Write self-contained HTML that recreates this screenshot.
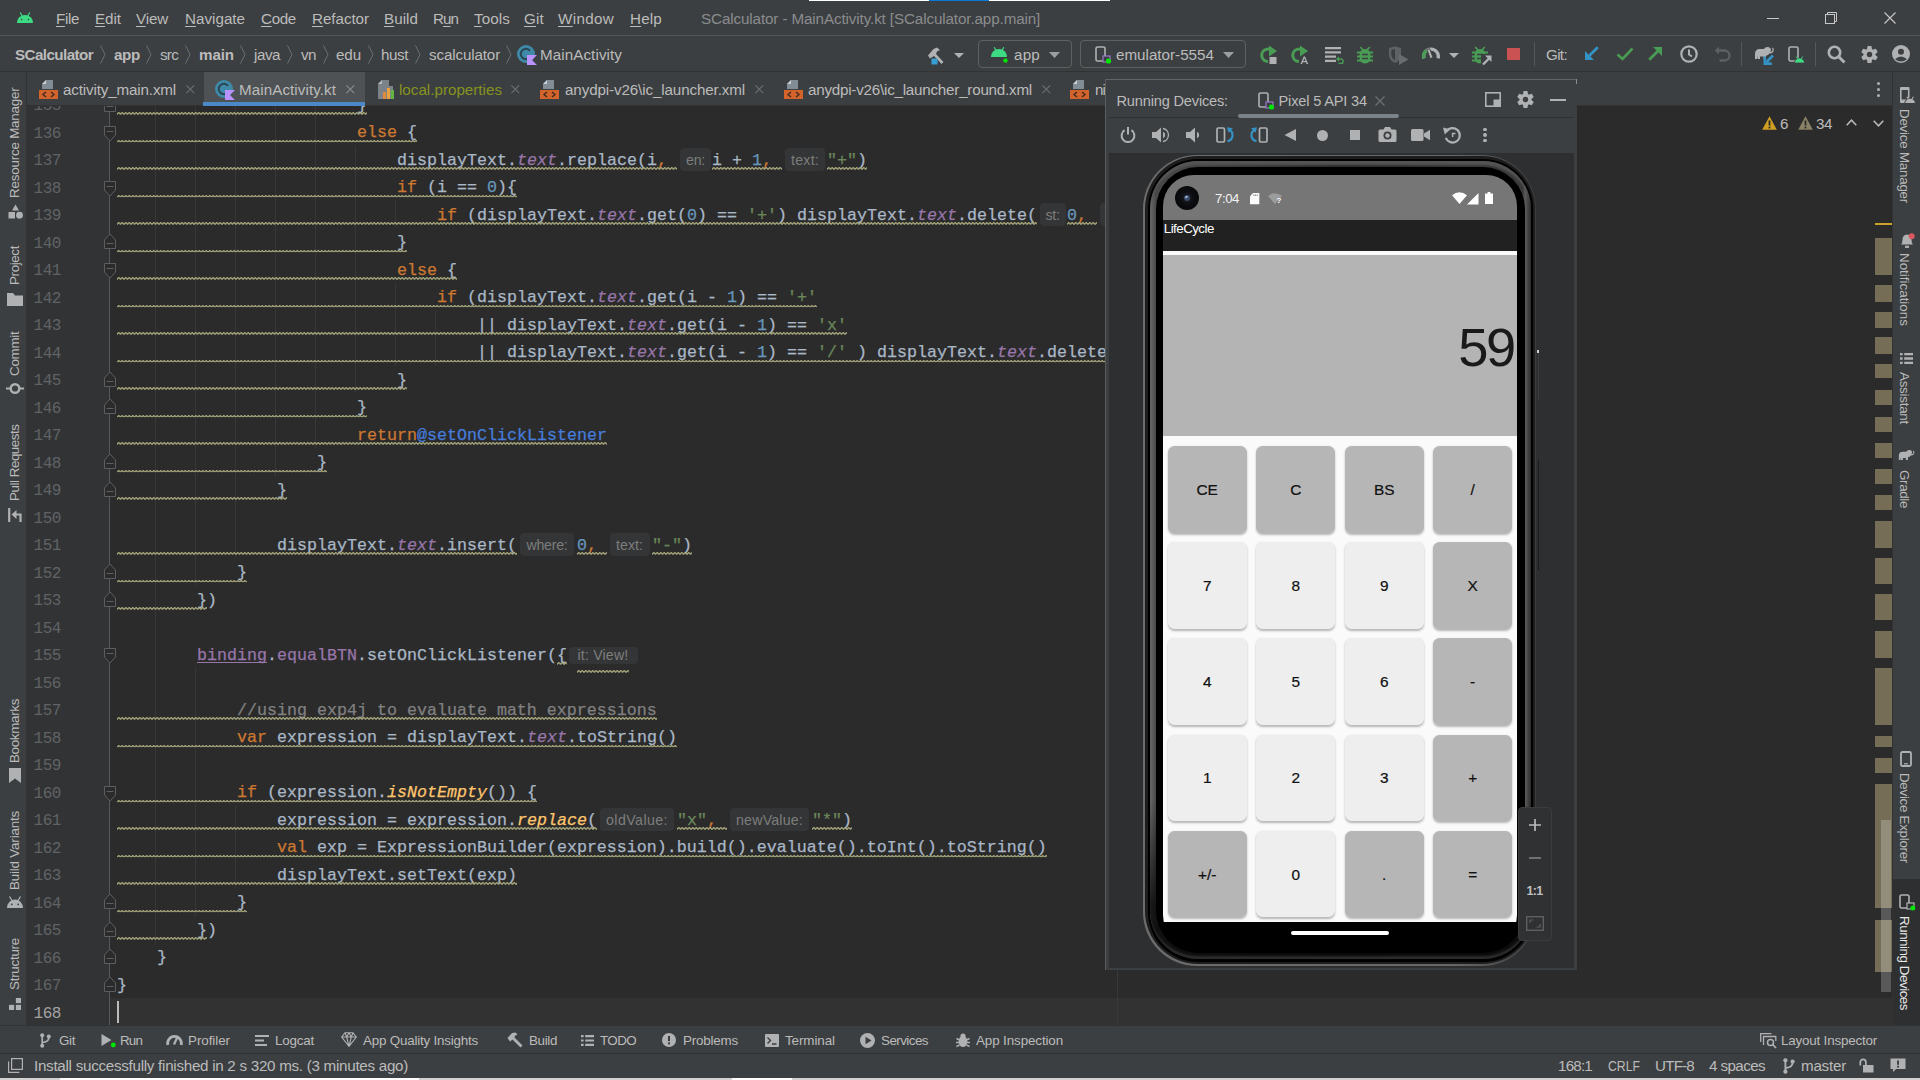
<!DOCTYPE html>
<html><head><meta charset="utf-8"><title>SCalculator</title>
<style>
html,body{margin:0;padding:0;background:#2b2b2b;}
body{width:1920px;height:1080px;position:relative;overflow:hidden;font-family:"Liberation Sans",sans-serif;}
div,span.t,svg{position:absolute;}
span.t{white-space:pre;line-height:1;}
svg{overflow:visible;}
u{text-decoration:underline;text-underline-offset:2px;text-decoration-thickness:1px;}
</style></head>
<body>
<div style="left:0px;top:0px;width:1920px;height:1080px;background:#2b2b2b;"></div>
<div style="left:0px;top:0px;width:1920px;height:36px;background:#3c3f41;"></div>
<div style="left:0px;top:35px;width:1920px;height:1px;background:#555555;"></div>
<div style="left:0px;top:36px;width:1920px;height:36px;background:#3c3f41;"></div>
<div style="left:0px;top:71px;width:1920px;height:1px;background:#323232;"></div>
<div style="left:0px;top:72px;width:1920px;height:33px;background:#3c3f41;"></div>
<div style="left:0px;top:105px;width:1920px;height:1px;background:#323232;"></div>
<div style="left:809px;top:0px;width:120px;height:1px;background:#ffffff;"></div>
<div style="left:929px;top:0px;width:60px;height:1px;background:#0a78d7;"></div>
<div style="left:989px;top:0px;width:121px;height:1px;background:#ffffff;"></div>
<svg style="left:17px;top:12px;" width="16" height="11" viewBox="0 0 16 11"><path d="M0 11 A8 8 0 0 1 16 11 Z" fill="#3ddc84"/><path d="M3.2 0.5 L5.2 4 M12.8 0.5 L10.8 4" stroke="#3ddc84" stroke-width="1.2"/><circle cx="4.6" cy="7.6" r="0.8" fill="#3c3f41"/><circle cx="11.4" cy="7.6" r="0.8" fill="#3c3f41"/></svg>
<span class="t" style="font-size:15.2px;color:#bbbbbb;letter-spacing:-0.37px;left:56px;top:11.13px;"><u>F</u>ile</span>
<span class="t" style="font-size:15.2px;color:#bbbbbb;letter-spacing:-0.05px;left:95px;top:11.13px;"><u>E</u>dit</span>
<span class="t" style="font-size:15.2px;color:#bbbbbb;letter-spacing:-0.16px;left:136px;top:11.13px;"><u>V</u>iew</span>
<span class="t" style="font-size:15.2px;color:#bbbbbb;letter-spacing:0.01px;left:185px;top:11.13px;"><u>N</u>avigate</span>
<span class="t" style="font-size:15.2px;color:#bbbbbb;letter-spacing:-0.33px;left:261px;top:11.13px;"><u>C</u>ode</span>
<span class="t" style="font-size:15.2px;color:#bbbbbb;letter-spacing:-0.05px;left:312px;top:11.13px;"><u>R</u>efactor</span>
<span class="t" style="font-size:15.2px;color:#bbbbbb;letter-spacing:0.04px;left:384px;top:11.13px;"><u>B</u>uild</span>
<span class="t" style="font-size:15.2px;color:#bbbbbb;letter-spacing:-0.96px;left:433px;top:11.13px;">R<u>u</u>n</span>
<span class="t" style="font-size:15.2px;color:#bbbbbb;letter-spacing:0.11px;left:474px;top:11.13px;"><u>T</u>ools</span>
<span class="t" style="font-size:15.2px;color:#bbbbbb;letter-spacing:0.19px;left:524px;top:11.13px;"><u>G</u>it</span>
<span class="t" style="font-size:15.2px;color:#bbbbbb;letter-spacing:0.33px;left:558px;top:11.13px;"><u>W</u>indow</span>
<span class="t" style="font-size:15.2px;color:#bbbbbb;letter-spacing:0.19px;left:630px;top:11.13px;"><u>H</u>elp</span>
<span class="t" style="font-size:15.2px;color:#8a8c8e;letter-spacing:-0.11px;left:701px;top:11.13px;">SCalculator - MainActivity.kt [SCalculator.app.main]</span>
<div style="left:1767px;top:18px;width:12px;height:1px;background:#c8c8c8;"></div>
<svg style="left:1825px;top:12px;" width="12" height="12" viewBox="0 0 12 12"><path d="M2.5 2.5 V0.5 H11.5 V9.5 H9.5" fill="none" stroke="#c8c8c8" stroke-width="1"/><rect x="0.5" y="2.5" width="9" height="9" fill="none" stroke="#c8c8c8" stroke-width="1"/></svg>
<svg style="left:1884px;top:12px;" width="12" height="12" viewBox="0 0 12 12"><path d="M0.5 0.5 L11.5 11.5 M11.5 0.5 L0.5 11.5" stroke="#c8c8c8" stroke-width="1.1"/></svg>
<span class="t" style="font-size:15.2px;color:#bbbbbb;font-weight:bold;letter-spacing:-0.58px;left:15px;top:47.13px;">SCalculator</span>
<span class="t" style="font-size:15.2px;color:#bbbbbb;font-weight:bold;letter-spacing:-0.34px;left:114px;top:47.13px;">app</span>
<span class="t" style="font-size:15.2px;color:#bbbbbb;letter-spacing:-0.75px;left:160px;top:47.13px;">src</span>
<span class="t" style="font-size:15.2px;color:#bbbbbb;font-weight:bold;letter-spacing:-0.11px;left:199px;top:47.13px;">main</span>
<span class="t" style="font-size:15.2px;color:#bbbbbb;letter-spacing:-0.47px;left:254px;top:47.13px;">java</span>
<span class="t" style="font-size:15.2px;color:#bbbbbb;letter-spacing:-0.52px;left:301px;top:47.13px;">vn</span>
<span class="t" style="font-size:15.2px;color:#bbbbbb;letter-spacing:-0.12px;left:336px;top:47.13px;">edu</span>
<span class="t" style="font-size:15.2px;color:#bbbbbb;letter-spacing:-0.43px;left:381px;top:47.13px;">hust</span>
<span class="t" style="font-size:15.2px;color:#bbbbbb;letter-spacing:-0.14px;left:429px;top:47.13px;">scalculator</span>
<svg style="left:100px;top:45px;" width="6" height="19" viewBox="0 0 6 19"><path d="M0.5 0.5 L5 9.5 L0.5 18.5" fill="none" stroke="#6b6d6f" stroke-width="1"/></svg>
<svg style="left:146px;top:45px;" width="6" height="19" viewBox="0 0 6 19"><path d="M0.5 0.5 L5 9.5 L0.5 18.5" fill="none" stroke="#6b6d6f" stroke-width="1"/></svg>
<svg style="left:185px;top:45px;" width="6" height="19" viewBox="0 0 6 19"><path d="M0.5 0.5 L5 9.5 L0.5 18.5" fill="none" stroke="#6b6d6f" stroke-width="1"/></svg>
<svg style="left:240px;top:45px;" width="6" height="19" viewBox="0 0 6 19"><path d="M0.5 0.5 L5 9.5 L0.5 18.5" fill="none" stroke="#6b6d6f" stroke-width="1"/></svg>
<svg style="left:287px;top:45px;" width="6" height="19" viewBox="0 0 6 19"><path d="M0.5 0.5 L5 9.5 L0.5 18.5" fill="none" stroke="#6b6d6f" stroke-width="1"/></svg>
<svg style="left:323px;top:45px;" width="6" height="19" viewBox="0 0 6 19"><path d="M0.5 0.5 L5 9.5 L0.5 18.5" fill="none" stroke="#6b6d6f" stroke-width="1"/></svg>
<svg style="left:368px;top:45px;" width="6" height="19" viewBox="0 0 6 19"><path d="M0.5 0.5 L5 9.5 L0.5 18.5" fill="none" stroke="#6b6d6f" stroke-width="1"/></svg>
<svg style="left:415px;top:45px;" width="6" height="19" viewBox="0 0 6 19"><path d="M0.5 0.5 L5 9.5 L0.5 18.5" fill="none" stroke="#6b6d6f" stroke-width="1"/></svg>
<svg style="left:506px;top:45px;" width="6" height="19" viewBox="0 0 6 19"><path d="M0.5 0.5 L5 9.5 L0.5 18.5" fill="none" stroke="#6b6d6f" stroke-width="1"/></svg>
<svg style="left:517px;top:45px;" width="20" height="20" viewBox="0 0 20 20"><circle cx="9" cy="9" r="9" fill="#3e8aa8"/><path d="M13 5.8 A5.2 5.2 0 1 0 13 12.2" fill="none" stroke="#2b4652" stroke-width="2"/><path d="M10 10 H20 L15 15 L20 20 H10 Z" fill="#b992fb"/></svg>
<span class="t" style="font-size:15.2px;color:#bbbbbb;letter-spacing:0.08px;left:540px;top:47.13px;">MainActivity</span>
<svg style="left:926px;top:46px;" width="20" height="19" viewBox="0 0 20 19"><path d="M2 9.5 L7.5 3 L11 1.5 L14 4 L11 5.5 L10 8 L17.5 16 L15.5 18 L8 10 L5.5 11.5 L4 12.5 Z" fill="#afb1b3"/><rect x="5.5" y="12.5" width="6" height="6" fill="#389fd6"/></svg>
<svg style="left:954px;top:53px;" width="10" height="5" viewBox="0 0 10 5"><path d="M0 0 H10 L5 5 Z" fill="#afb1b3"/></svg>
<div style="left:978px;top:40px;width:94px;height:28px;background:transparent;border:1px solid #5e6060;border-radius:4px;box-sizing:border-box;"></div>
<svg style="left:991px;top:47px;" width="18" height="17" viewBox="0 0 18 17"><path d="M0 10 A8 8 0 0 1 16 10 Z" fill="#3ddc84"/><path d="M3.2 0.3 L5 3.5 M12.8 0.3 L11 3.5" stroke="#3ddc84" stroke-width="1.2"/><circle cx="14.5" cy="13.5" r="2.6" fill="#00e600" stroke="#3c3f41" stroke-width="0.8"/></svg>
<span class="t" style="font-size:15.2px;color:#bbbbbb;letter-spacing:0.22px;left:1014px;top:47.13px;">app</span>
<svg style="left:1049px;top:52px;" width="11" height="6" viewBox="0 0 11 6"><path d="M0 0 H11 L5.5 6 Z" fill="#9b9da0"/></svg>
<div style="left:1080px;top:40px;width:166px;height:28px;background:transparent;border:1px solid #5e6060;border-radius:4px;box-sizing:border-box;"></div>
<svg style="left:1095px;top:46px;" width="17" height="18" viewBox="0 0 17 18"><rect x="1" y="1" width="9" height="14" rx="1.5" fill="none" stroke="#afb1b3" stroke-width="1.6"/><rect x="8" y="10" width="7" height="6" fill="#3c3f41" stroke="#9876c8" stroke-width="1.2"/><circle cx="13.5" cy="15" r="2.6" fill="#00e600"/></svg>
<span class="t" style="font-size:15.2px;color:#bbbbbb;left:1116px;top:47.13px;">emulator-5554</span>
<svg style="left:1223px;top:52px;" width="11" height="6" viewBox="0 0 11 6"><path d="M0 0 H11 L5.5 6 Z" fill="#9b9da0"/></svg>
<svg style="left:1260px;top:46px;" width="18" height="18" viewBox="0 0 18 18"><path d="M13.5 6.5 A6.2 6.2 0 1 0 8 15.5" fill="none" stroke="#499c54" stroke-width="3"/><path d="M9 -0.5 L17 5 L9 10.5 Z" fill="#499c54"/><rect x="9.5" y="11" width="7" height="7" fill="#afb1b3"/></svg>
<svg style="left:1291px;top:46px;" width="18" height="18" viewBox="0 0 18 18"><path d="M13.5 6.5 A6.2 6.2 0 1 0 8 15.5" fill="none" stroke="#499c54" stroke-width="3"/><path d="M9 -0.5 L17 5 L9 10.5 Z" fill="#499c54"/><path d="M9.5 18 L12.7 10.5 H14 L17.2 18 H15.6 L15 16.3 H11.7 L11.1 18 Z M12.2 15 H14.5 L13.35 12.2 Z" fill="#afb1b3" fill-rule="evenodd"/></svg>
<svg style="left:1325px;top:47px;" width="19" height="17" viewBox="0 0 19 17"><path d="M0 1.2 H16 M0 5.4 H16 M0 9.6 H11 M0 13.8 H11" stroke="#afb1b3" stroke-width="2.3"/><path d="M13 12 H16 A2.2 2.2 0 0 1 16 16.4 H13.5" fill="none" stroke="#499c54" stroke-width="1.4"/><path d="M14 9.2 L11 12 L14 14.8 Z" fill="#499c54"/></svg>
<svg style="left:1357px;top:45.5px;" width="16" height="18" viewBox="0 0 16 18"><path d="M3.2 1 L6 4 M12.8 1 L10 4" stroke="#499c54" stroke-width="1.7" fill="none"/><path d="M8 3 Q13.5 3 13.5 10 Q13.5 17.5 8 17.5 Q2.5 17.5 2.5 10 Q2.5 3 8 3 Z" fill="#499c54"/><path d="M0 6.6 H4 M16 6.6 H12 M0 10.6 H4 M16 10.6 H12 M0 14.6 H4 M16 14.6 H12" stroke="#499c54" stroke-width="2"/><path d="M5 8.6 H11 M5 12.6 H11" stroke="#3c3f41" stroke-width="1.5"/></svg>
<svg style="left:1388px;top:46px;" width="21" height="19" viewBox="0 0 21 19"><path d="M1 2 L7 0.5 L13 2 V9 Q13 14 7 17 Q1 14 1 9 Z" fill="#5f6264"/><path d="M7 3 V14.5 Q4 12.5 3.3 9 V4 Z" fill="#3c3f41"/><path d="M11 8 L20.5 13.5 L11 19 Z" fill="#6a6d6f"/></svg>
<svg style="left:1422px;top:46.5px;" width="18" height="13" viewBox="0 0 18 13"><path d="M1.85 11.4 A7.4 7.4 0 1 1 16.15 11.4" fill="none" stroke="#afb1b3" stroke-width="3.2"/><path d="M1.85 11.4 A7.4 7.4 0 0 1 4.76 3.44" fill="none" stroke="#499c54" stroke-width="3.4"/><path d="M4.9 2.6 L7.6 1.6 L11 10.6 L8.2 11.6 Z" fill="#afb1b3" stroke="#3c3f41" stroke-width="0.9"/></svg>
<svg style="left:1449px;top:53px;" width="10" height="5" viewBox="0 0 10 5"><path d="M0 0 H10 L5 5 Z" fill="#afb1b3"/></svg>
<svg style="left:1472px;top:45.5px;" width="16" height="18" viewBox="0 0 16 18"><path d="M3.2 1 L6 4 M12.8 1 L10 4" stroke="#499c54" stroke-width="1.7" fill="none"/><path d="M8 3 Q13.5 3 13.5 10 Q13.5 17.5 8 17.5 Q2.5 17.5 2.5 10 Q2.5 3 8 3 Z" fill="#499c54"/><path d="M0 6.6 H4 M16 6.6 H12 M0 10.6 H4 M16 10.6 H12 M0 14.6 H4 M16 14.6 H12" stroke="#499c54" stroke-width="2"/><path d="M5 8.6 H11 M5 12.6 H11" stroke="#3c3f41" stroke-width="1.5"/></svg>
<svg style="left:1481px;top:54px;" width="11" height="11" viewBox="0 0 11 11"><rect x="0" y="0" width="11" height="11" fill="#3c3f41"/><path d="M2 10.5 L8.5 4" fill="none" stroke="#afb1b3" stroke-width="2.4"/><path d="M4 1.5 H10.5 V8 Z" fill="#afb1b3"/></svg>
<div style="left:1507px;top:47.5px;width:12.5px;height:12.5px;background:#cb5252;"></div>
<div style="left:1534px;top:42px;width:1px;height:24px;background:#555759;"></div>
<span class="t" style="font-size:15.2px;color:#bbbbbb;letter-spacing:-0.66px;left:1546px;top:47.13px;">Git:</span>
<svg style="left:1584px;top:46px;" width="15" height="15" viewBox="0 0 15 15"><path d="M13.8 1.2 L5 10" fill="none" stroke="#3592c4" stroke-width="2.7"/><path d="M1 14 V5 L10 14 Z" fill="#3592c4"/></svg>
<svg style="left:1616px;top:47px;" width="18" height="14" viewBox="0 0 18 14"><path d="M1.5 7.5 L6.5 12 L16.5 1.5" fill="none" stroke="#499c54" stroke-width="2.6"/></svg>
<svg style="left:1648px;top:46px;" width="15" height="15" viewBox="0 0 15 15"><path d="M1.2 13.8 L10 5" fill="none" stroke="#499c54" stroke-width="2.7"/><path d="M14 1 H5 L14 10 Z" fill="#499c54"/></svg>
<svg style="left:1680px;top:45px;" width="18" height="18" viewBox="0 0 18 18"><circle cx="9" cy="9" r="7.7" fill="none" stroke="#afb1b3" stroke-width="2.2"/><path d="M9 4.5 V9.5 L12 11.5" fill="none" stroke="#afb1b3" stroke-width="2"/></svg>
<svg style="left:1714px;top:46px;" width="17" height="16" viewBox="0 0 17 16"><path d="M5 0.5 L0.8 4.5 L5 8.5 Z" fill="#5e6062"/><path d="M3.5 4.5 H10.5 A5 5 0 0 1 10.5 14.5 H5.5" fill="none" stroke="#5e6062" stroke-width="2.3"/></svg>
<div style="left:1741px;top:42px;width:1px;height:24px;background:#555759;"></div>
<svg style="left:1754px;top:46px;" width="20" height="19" viewBox="0 0 20 19"><path d="M1 13 V8 Q1 3 6 3 H10 Q11 0.8 14 1 Q16.5 1.2 17 3.5 Q17.3 5 16 5.8 Q17.5 6 18.3 4.8 Q19 3.5 18 2.6 L18.8 1.6 Q20.3 3 19.6 5.2 Q18.5 7.8 15.5 7.6 Q14 9.5 12 9.8 V13 H9.5 V10.5 H6 V13 H3.5 V10 Q3 11 3 13 Z" fill="#afb1b3"/><path d="M19 9.5 L12.5 16 M10.8 10.5 V17.6 H17.8" fill="none" stroke="#3592c4" stroke-width="2.6"/></svg>
<svg style="left:1788px;top:46px;" width="17" height="18" viewBox="0 0 17 18"><rect x="1" y="1" width="9" height="14" rx="1.5" fill="none" stroke="#afb1b3" stroke-width="1.6"/><path d="M6.5 17 A5 5 0 0 1 16.5 17 Z" fill="#3ddc84" stroke="#3c3f41" stroke-width="0.8"/><path d="M8.3 10.6 L9.6 12.6 M14.7 10.6 L13.4 12.6" stroke="#3ddc84" stroke-width="1"/></svg>
<div style="left:1815px;top:42px;width:1px;height:24px;background:#555759;"></div>
<svg style="left:1827px;top:45px;" width="19" height="19" viewBox="0 0 19 19"><circle cx="7.5" cy="7.5" r="5.7" fill="none" stroke="#afb1b3" stroke-width="2.6"/><path d="M11.8 11.8 L17.5 17.5" stroke="#afb1b3" stroke-width="3"/></svg>
<svg style="left:1861px;top:46px;" width="17" height="17" viewBox="0 0 17 17"><g transform="translate(8.5 8.5)"><path d="M-2.6 -5 L-1.9 -8.4 H1.9 L2.6 -5 Z" transform="rotate(0)" fill="#afb1b3"/><path d="M-2.6 -5 L-1.9 -8.4 H1.9 L2.6 -5 Z" transform="rotate(60)" fill="#afb1b3"/><path d="M-2.6 -5 L-1.9 -8.4 H1.9 L2.6 -5 Z" transform="rotate(120)" fill="#afb1b3"/><path d="M-2.6 -5 L-1.9 -8.4 H1.9 L2.6 -5 Z" transform="rotate(180)" fill="#afb1b3"/><path d="M-2.6 -5 L-1.9 -8.4 H1.9 L2.6 -5 Z" transform="rotate(240)" fill="#afb1b3"/><path d="M-2.6 -5 L-1.9 -8.4 H1.9 L2.6 -5 Z" transform="rotate(300)" fill="#afb1b3"/><circle r="5.9" fill="#afb1b3"/><circle r="2.7" fill="#3c3f41"/></g></svg>
<svg style="left:1892px;top:45px;" width="18" height="18" viewBox="0 0 18 18"><circle cx="9" cy="9" r="9" fill="#afb1b3"/><circle cx="9" cy="6.7" r="3" fill="#3c3f41"/><path d="M3 14.2 Q9 9 15 14.2 Q9 19 3 14.2 Z" fill="#3c3f41"/></svg>
<div style="left:204px;top:72px;width:161px;height:33px;background:#4e5254;"></div>
<div style="left:203px;top:102px;width:162px;height:4px;background:#4a88c7;"></div>
<svg style="left:39px;top:80px;" width="19" height="19" viewBox="0 0 19 19"><path d="M7 0 H14 V9 H3 V4 Z" fill="#9aa7b0" opacity="0.75"/><path d="M3 4 L7 0 V4 Z" fill="#c8d0d6"/><rect x="0" y="10" width="19" height="9" fill="#d1632b"/><path d="M7 12 L4 14.5 L7 17 M12 12 L15 14.5 L12 17" fill="none" stroke="#3a2a22" stroke-width="1.3"/></svg>
<span class="t" style="font-size:15.2px;color:#bbbbbb;letter-spacing:-0.15px;left:63px;top:82.13px;">activity_main.xml</span>
<svg style="left:186.1px;top:85.3px;" width="8.6" height="8.6" viewBox="0 0 8.6 8.6"><path d="M0.4 0.4 L8.2 8.2 M8.2 0.4 L0.4 8.2" stroke="#6c7073" stroke-width="1.1"/></svg>
<svg style="left:215px;top:80px;" width="20" height="20" viewBox="0 0 20 20"><circle cx="9" cy="9" r="9" fill="#3e8aa8"/><path d="M13 5.8 A5.2 5.2 0 1 0 13 12.2" fill="none" stroke="#2b4652" stroke-width="2"/><path d="M10 10 H20 L15 15 L20 20 H10 Z" fill="#b992fb"/></svg>
<span class="t" style="font-size:15.2px;color:#bbbbbb;letter-spacing:0.07px;left:239px;top:82.13px;">MainActivity.kt</span>
<svg style="left:346.1px;top:85.3px;" width="8.6" height="8.6" viewBox="0 0 8.6 8.6"><path d="M0.4 0.4 L8.2 8.2 M8.2 0.4 L0.4 8.2" stroke="#8a8d8f" stroke-width="1.1"/></svg>
<svg style="left:377px;top:80px;" width="18" height="19" viewBox="0 0 18 19"><path d="M5 0 H12 V6 H16 V19 H1 V4 Z" fill="#7c8388"/><path d="M1 4 L5 0 V4 Z" fill="#b6bcc0"/><rect x="6" y="12" width="3" height="7" fill="#e08a3c"/><rect x="10" y="8" width="3" height="11" fill="#e8a33d"/><rect x="14" y="10" width="3" height="9" fill="#62b543"/></svg>
<span class="t" style="font-size:15.2px;color:#86921f;left:399px;top:82.13px;">local.properties</span>
<svg style="left:511.1px;top:85.3px;" width="8.6" height="8.6" viewBox="0 0 8.6 8.6"><path d="M0.4 0.4 L8.2 8.2 M8.2 0.4 L0.4 8.2" stroke="#6c7073" stroke-width="1.1"/></svg>
<svg style="left:540px;top:80px;" width="19" height="19" viewBox="0 0 19 19"><path d="M7 0 H14 V9 H3 V4 Z" fill="#9aa7b0" opacity="0.75"/><path d="M3 4 L7 0 V4 Z" fill="#c8d0d6"/><rect x="0" y="10" width="19" height="9" fill="#d1632b"/><path d="M7 12 L4 14.5 L7 17 M12 12 L15 14.5 L12 17" fill="none" stroke="#3a2a22" stroke-width="1.3"/></svg>
<span class="t" style="font-size:15.2px;color:#bbbbbb;letter-spacing:-0.12px;left:565px;top:82.13px;">anydpi-v26\ic_launcher.xml</span>
<svg style="left:755.1px;top:85.3px;" width="8.6" height="8.6" viewBox="0 0 8.6 8.6"><path d="M0.4 0.4 L8.2 8.2 M8.2 0.4 L0.4 8.2" stroke="#6c7073" stroke-width="1.1"/></svg>
<svg style="left:784px;top:80px;" width="19" height="19" viewBox="0 0 19 19"><path d="M7 0 H14 V9 H3 V4 Z" fill="#9aa7b0" opacity="0.75"/><path d="M3 4 L7 0 V4 Z" fill="#c8d0d6"/><rect x="0" y="10" width="19" height="9" fill="#d1632b"/><path d="M7 12 L4 14.5 L7 17 M12 12 L15 14.5 L12 17" fill="none" stroke="#3a2a22" stroke-width="1.3"/></svg>
<span class="t" style="font-size:15.2px;color:#bbbbbb;letter-spacing:-0.23px;left:808px;top:82.13px;">anydpi-v26\ic_launcher_round.xml</span>
<svg style="left:1042.1px;top:85.3px;" width="8.6" height="8.6" viewBox="0 0 8.6 8.6"><path d="M0.4 0.4 L8.2 8.2 M8.2 0.4 L0.4 8.2" stroke="#6c7073" stroke-width="1.1"/></svg>
<svg style="left:1070px;top:80px;" width="19" height="19" viewBox="0 0 19 19"><path d="M7 0 H14 V9 H3 V4 Z" fill="#9aa7b0" opacity="0.75"/><path d="M3 4 L7 0 V4 Z" fill="#c8d0d6"/><rect x="0" y="10" width="19" height="9" fill="#d1632b"/><path d="M7 12 L4 14.5 L7 17 M12 12 L15 14.5 L12 17" fill="none" stroke="#3a2a22" stroke-width="1.3"/></svg>
<span class="t" style="font-size:15.2px;color:#bbbbbb;letter-spacing:-0.91px;left:1095px;top:82.13px;">ni</span>
<div style="left:1876.5px;top:81.5px;width:3px;height:3px;background:#afb1b3;border-radius:50%;"></div>
<div style="left:1876.5px;top:87.5px;width:3px;height:3px;background:#afb1b3;border-radius:50%;"></div>
<div style="left:1876.5px;top:93.5px;width:3px;height:3px;background:#afb1b3;border-radius:50%;"></div>
<div style="left:0;top:106px;width:1920px;height:919px;overflow:hidden"><div style="left:0;top:-106px;width:1920px;height:1080px">
<div style="left:27px;top:106px;width:83px;height:919px;background:#313335;"></div>
<div style="left:110px;top:106px;width:1782px;height:919px;background:#2b2b2b;"></div>
<div style="left:110px;top:998px;width:1782px;height:27.5px;background:#323232;"></div>
<div style="left:1117px;top:106px;width:1px;height:919px;background:#383838;"></div>
<div style="left:155px;top:90.75px;width:1px;height:852.5px;background:#373737;"></div>
<div style="left:195px;top:90.75px;width:1px;height:495px;background:#373737;"></div>
<div style="left:195px;top:668.25px;width:1px;height:247.5px;background:#373737;"></div>
<div style="left:235px;top:90.75px;width:1px;height:467.5px;background:#373737;"></div>
<div style="left:235px;top:805.75px;width:1px;height:82.5px;background:#373737;"></div>
<div style="left:275px;top:90.75px;width:1px;height:385px;background:#373737;"></div>
<div style="left:315px;top:90.75px;width:1px;height:357.5px;background:#373737;"></div>
<div style="left:355px;top:145.75px;width:1px;height:247.5px;background:#373737;"></div>
<div style="left:395px;top:200.75px;width:1px;height:27.5px;background:#373737;"></div>
<div style="left:395px;top:283.25px;width:1px;height:82.5px;background:#373737;"></div>
<div style="left:435px;top:310.75px;width:1px;height:55px;background:#373737;"></div>
<div style="left:109px;top:106px;width:1px;height:919px;background:#56585a;"></div>
<svg style="left:104px;top:125.5px;" width="12" height="16" viewBox="0 0 12 16"><path d="M0.5 0.5 H11.5 V9 L6 15 L0.5 9 Z" fill="#2b2b2b" stroke="#5c5f61" stroke-width="1"/><path d="M2.5 5.5 H9.5" stroke="#5c5f61" stroke-width="1"/></svg>
<svg style="left:104px;top:180.5px;" width="12" height="16" viewBox="0 0 12 16"><path d="M0.5 0.5 H11.5 V9 L6 15 L0.5 9 Z" fill="#2b2b2b" stroke="#5c5f61" stroke-width="1"/><path d="M2.5 5.5 H9.5" stroke="#5c5f61" stroke-width="1"/></svg>
<svg style="left:104px;top:263px;" width="12" height="16" viewBox="0 0 12 16"><path d="M0.5 0.5 H11.5 V9 L6 15 L0.5 9 Z" fill="#2b2b2b" stroke="#5c5f61" stroke-width="1"/><path d="M2.5 5.5 H9.5" stroke="#5c5f61" stroke-width="1"/></svg>
<svg style="left:104px;top:648px;" width="12" height="16" viewBox="0 0 12 16"><path d="M0.5 0.5 H11.5 V9 L6 15 L0.5 9 Z" fill="#2b2b2b" stroke="#5c5f61" stroke-width="1"/><path d="M2.5 5.5 H9.5" stroke="#5c5f61" stroke-width="1"/></svg>
<svg style="left:104px;top:785.5px;" width="12" height="16" viewBox="0 0 12 16"><path d="M0.5 0.5 H11.5 V9 L6 15 L0.5 9 Z" fill="#2b2b2b" stroke="#5c5f61" stroke-width="1"/><path d="M2.5 5.5 H9.5" stroke="#5c5f61" stroke-width="1"/></svg>
<svg style="left:104px;top:95.5px;" width="12" height="16" viewBox="0 0 12 16"><path d="M0.5 15.5 H11.5 V7 L6 1 L0.5 7 Z" fill="#2b2b2b" stroke="#5c5f61" stroke-width="1"/><path d="M2.5 10.5 H9.5" stroke="#5c5f61" stroke-width="1"/></svg>
<svg style="left:104px;top:233px;" width="12" height="16" viewBox="0 0 12 16"><path d="M0.5 15.5 H11.5 V7 L6 1 L0.5 7 Z" fill="#2b2b2b" stroke="#5c5f61" stroke-width="1"/><path d="M2.5 10.5 H9.5" stroke="#5c5f61" stroke-width="1"/></svg>
<svg style="left:104px;top:370.5px;" width="12" height="16" viewBox="0 0 12 16"><path d="M0.5 15.5 H11.5 V7 L6 1 L0.5 7 Z" fill="#2b2b2b" stroke="#5c5f61" stroke-width="1"/><path d="M2.5 10.5 H9.5" stroke="#5c5f61" stroke-width="1"/></svg>
<svg style="left:104px;top:398px;" width="12" height="16" viewBox="0 0 12 16"><path d="M0.5 15.5 H11.5 V7 L6 1 L0.5 7 Z" fill="#2b2b2b" stroke="#5c5f61" stroke-width="1"/><path d="M2.5 10.5 H9.5" stroke="#5c5f61" stroke-width="1"/></svg>
<svg style="left:104px;top:453px;" width="12" height="16" viewBox="0 0 12 16"><path d="M0.5 15.5 H11.5 V7 L6 1 L0.5 7 Z" fill="#2b2b2b" stroke="#5c5f61" stroke-width="1"/><path d="M2.5 10.5 H9.5" stroke="#5c5f61" stroke-width="1"/></svg>
<svg style="left:104px;top:480.5px;" width="12" height="16" viewBox="0 0 12 16"><path d="M0.5 15.5 H11.5 V7 L6 1 L0.5 7 Z" fill="#2b2b2b" stroke="#5c5f61" stroke-width="1"/><path d="M2.5 10.5 H9.5" stroke="#5c5f61" stroke-width="1"/></svg>
<svg style="left:104px;top:563px;" width="12" height="16" viewBox="0 0 12 16"><path d="M0.5 15.5 H11.5 V7 L6 1 L0.5 7 Z" fill="#2b2b2b" stroke="#5c5f61" stroke-width="1"/><path d="M2.5 10.5 H9.5" stroke="#5c5f61" stroke-width="1"/></svg>
<svg style="left:104px;top:590.5px;" width="12" height="16" viewBox="0 0 12 16"><path d="M0.5 15.5 H11.5 V7 L6 1 L0.5 7 Z" fill="#2b2b2b" stroke="#5c5f61" stroke-width="1"/><path d="M2.5 10.5 H9.5" stroke="#5c5f61" stroke-width="1"/></svg>
<svg style="left:104px;top:893px;" width="12" height="16" viewBox="0 0 12 16"><path d="M0.5 15.5 H11.5 V7 L6 1 L0.5 7 Z" fill="#2b2b2b" stroke="#5c5f61" stroke-width="1"/><path d="M2.5 10.5 H9.5" stroke="#5c5f61" stroke-width="1"/></svg>
<svg style="left:104px;top:920.5px;" width="12" height="16" viewBox="0 0 12 16"><path d="M0.5 15.5 H11.5 V7 L6 1 L0.5 7 Z" fill="#2b2b2b" stroke="#5c5f61" stroke-width="1"/><path d="M2.5 10.5 H9.5" stroke="#5c5f61" stroke-width="1"/></svg>
<svg style="left:104px;top:948px;" width="12" height="16" viewBox="0 0 12 16"><path d="M0.5 15.5 H11.5 V7 L6 1 L0.5 7 Z" fill="#2b2b2b" stroke="#5c5f61" stroke-width="1"/><path d="M2.5 10.5 H9.5" stroke="#5c5f61" stroke-width="1"/></svg>
<svg style="left:104px;top:975.5px;" width="12" height="16" viewBox="0 0 12 16"><path d="M0.5 15.5 H11.5 V7 L6 1 L0.5 7 Z" fill="#2b2b2b" stroke="#5c5f61" stroke-width="1"/><path d="M2.5 10.5 H9.5" stroke="#5c5f61" stroke-width="1"/></svg>
<span class="t" style="font-size:16px;color:#606366;font-family:'Liberation Mono', monospace;left:33.5px;top:98.14px;letter-spacing:-0.45px;">135</span>
<span class="t" style="font-size:16px;color:#606366;font-family:'Liberation Mono', monospace;left:33.5px;top:125.64px;letter-spacing:-0.45px;">136</span>
<span class="t" style="font-size:16px;color:#606366;font-family:'Liberation Mono', monospace;left:33.5px;top:153.14px;letter-spacing:-0.45px;">137</span>
<span class="t" style="font-size:16px;color:#606366;font-family:'Liberation Mono', monospace;left:33.5px;top:180.64px;letter-spacing:-0.45px;">138</span>
<span class="t" style="font-size:16px;color:#606366;font-family:'Liberation Mono', monospace;left:33.5px;top:208.14px;letter-spacing:-0.45px;">139</span>
<span class="t" style="font-size:16px;color:#606366;font-family:'Liberation Mono', monospace;left:33.5px;top:235.64px;letter-spacing:-0.45px;">140</span>
<span class="t" style="font-size:16px;color:#606366;font-family:'Liberation Mono', monospace;left:33.5px;top:263.14px;letter-spacing:-0.45px;">141</span>
<span class="t" style="font-size:16px;color:#606366;font-family:'Liberation Mono', monospace;left:33.5px;top:290.64px;letter-spacing:-0.45px;">142</span>
<span class="t" style="font-size:16px;color:#606366;font-family:'Liberation Mono', monospace;left:33.5px;top:318.14px;letter-spacing:-0.45px;">143</span>
<span class="t" style="font-size:16px;color:#606366;font-family:'Liberation Mono', monospace;left:33.5px;top:345.64px;letter-spacing:-0.45px;">144</span>
<span class="t" style="font-size:16px;color:#606366;font-family:'Liberation Mono', monospace;left:33.5px;top:373.14px;letter-spacing:-0.45px;">145</span>
<span class="t" style="font-size:16px;color:#606366;font-family:'Liberation Mono', monospace;left:33.5px;top:400.64px;letter-spacing:-0.45px;">146</span>
<span class="t" style="font-size:16px;color:#606366;font-family:'Liberation Mono', monospace;left:33.5px;top:428.14px;letter-spacing:-0.45px;">147</span>
<span class="t" style="font-size:16px;color:#606366;font-family:'Liberation Mono', monospace;left:33.5px;top:455.64px;letter-spacing:-0.45px;">148</span>
<span class="t" style="font-size:16px;color:#606366;font-family:'Liberation Mono', monospace;left:33.5px;top:483.14px;letter-spacing:-0.45px;">149</span>
<span class="t" style="font-size:16px;color:#606366;font-family:'Liberation Mono', monospace;left:33.5px;top:510.64px;letter-spacing:-0.45px;">150</span>
<span class="t" style="font-size:16px;color:#606366;font-family:'Liberation Mono', monospace;left:33.5px;top:538.14px;letter-spacing:-0.45px;">151</span>
<span class="t" style="font-size:16px;color:#606366;font-family:'Liberation Mono', monospace;left:33.5px;top:565.64px;letter-spacing:-0.45px;">152</span>
<span class="t" style="font-size:16px;color:#606366;font-family:'Liberation Mono', monospace;left:33.5px;top:593.14px;letter-spacing:-0.45px;">153</span>
<span class="t" style="font-size:16px;color:#606366;font-family:'Liberation Mono', monospace;left:33.5px;top:620.64px;letter-spacing:-0.45px;">154</span>
<span class="t" style="font-size:16px;color:#606366;font-family:'Liberation Mono', monospace;left:33.5px;top:648.14px;letter-spacing:-0.45px;">155</span>
<span class="t" style="font-size:16px;color:#606366;font-family:'Liberation Mono', monospace;left:33.5px;top:675.64px;letter-spacing:-0.45px;">156</span>
<span class="t" style="font-size:16px;color:#606366;font-family:'Liberation Mono', monospace;left:33.5px;top:703.14px;letter-spacing:-0.45px;">157</span>
<span class="t" style="font-size:16px;color:#606366;font-family:'Liberation Mono', monospace;left:33.5px;top:730.64px;letter-spacing:-0.45px;">158</span>
<span class="t" style="font-size:16px;color:#606366;font-family:'Liberation Mono', monospace;left:33.5px;top:758.14px;letter-spacing:-0.45px;">159</span>
<span class="t" style="font-size:16px;color:#606366;font-family:'Liberation Mono', monospace;left:33.5px;top:785.64px;letter-spacing:-0.45px;">160</span>
<span class="t" style="font-size:16px;color:#606366;font-family:'Liberation Mono', monospace;left:33.5px;top:813.14px;letter-spacing:-0.45px;">161</span>
<span class="t" style="font-size:16px;color:#606366;font-family:'Liberation Mono', monospace;left:33.5px;top:840.64px;letter-spacing:-0.45px;">162</span>
<span class="t" style="font-size:16px;color:#606366;font-family:'Liberation Mono', monospace;left:33.5px;top:868.14px;letter-spacing:-0.45px;">163</span>
<span class="t" style="font-size:16px;color:#606366;font-family:'Liberation Mono', monospace;left:33.5px;top:895.64px;letter-spacing:-0.45px;">164</span>
<span class="t" style="font-size:16px;color:#606366;font-family:'Liberation Mono', monospace;left:33.5px;top:923.14px;letter-spacing:-0.45px;">165</span>
<span class="t" style="font-size:16px;color:#606366;font-family:'Liberation Mono', monospace;left:33.5px;top:950.64px;letter-spacing:-0.45px;">166</span>
<span class="t" style="font-size:16px;color:#606366;font-family:'Liberation Mono', monospace;left:33.5px;top:978.14px;letter-spacing:-0.45px;">167</span>
<span class="t" style="font-size:16px;color:#a4a3a3;font-family:'Liberation Mono', monospace;left:33.5px;top:1005.64px;letter-spacing:-0.45px;">168</span>
<span class="t" style="font-size:16.67px;color:#a9b7c6;font-family:'Liberation Mono', monospace;left:357px;top:97.72px;-webkit-text-stroke:0.25px #a9b7c6;">}</span>
<span class="t" style="font-size:16.67px;color:#cc7832;font-family:'Liberation Mono', monospace;left:357px;top:125.22px;-webkit-text-stroke:0.25px #cc7832;">else</span>
<span class="t" style="font-size:16.67px;color:#a9b7c6;font-family:'Liberation Mono', monospace;left:407px;top:125.22px;-webkit-text-stroke:0.25px #a9b7c6;">{</span>
<div style="left:680px;top:148px;width:31px;height:22.5px;background:#343536;border-radius:4px;"></div>
<span class="t" style="font-size:14.2px;color:#7d7d7d;letter-spacing:-0.24px;left:686px;top:152.98px;">en:</span>
<div style="left:784.5px;top:148px;width:40px;height:22.5px;background:#343536;border-radius:4px;"></div>
<span class="t" style="font-size:14.2px;color:#7d7d7d;letter-spacing:0.24px;left:791px;top:152.98px;">text:</span>
<span class="t" style="font-size:16.67px;color:#a9b7c6;font-family:'Liberation Mono', monospace;left:397px;top:152.72px;-webkit-text-stroke:0.25px #a9b7c6;">displayText.</span>
<span class="t" style="font-size:16.67px;color:#9876aa;font-family:'Liberation Mono', monospace;font-style:italic;left:517px;top:152.72px;-webkit-text-stroke:0.25px #9876aa;">text</span>
<span class="t" style="font-size:16.67px;color:#a9b7c6;font-family:'Liberation Mono', monospace;left:557px;top:152.72px;-webkit-text-stroke:0.25px #a9b7c6;">.replace(i</span>
<span class="t" style="font-size:16.67px;color:#cc7832;font-family:'Liberation Mono', monospace;left:657px;top:152.72px;-webkit-text-stroke:0.25px #cc7832;">,</span>
<span class="t" style="font-size:16.67px;color:#a9b7c6;font-family:'Liberation Mono', monospace;left:712px;top:152.72px;-webkit-text-stroke:0.25px #a9b7c6;">i +</span>
<span class="t" style="font-size:16.67px;color:#6897bb;font-family:'Liberation Mono', monospace;left:752px;top:152.72px;-webkit-text-stroke:0.25px #6897bb;">1</span>
<span class="t" style="font-size:16.67px;color:#cc7832;font-family:'Liberation Mono', monospace;left:762px;top:152.72px;-webkit-text-stroke:0.25px #cc7832;">,</span>
<span class="t" style="font-size:16.67px;color:#6a8759;font-family:'Liberation Mono', monospace;left:827px;top:152.72px;-webkit-text-stroke:0.25px #6a8759;">"+"</span>
<span class="t" style="font-size:16.67px;color:#a9b7c6;font-family:'Liberation Mono', monospace;left:857px;top:152.72px;-webkit-text-stroke:0.25px #a9b7c6;">)</span>
<span class="t" style="font-size:16.67px;color:#cc7832;font-family:'Liberation Mono', monospace;left:397px;top:180.22px;-webkit-text-stroke:0.25px #cc7832;">if</span>
<span class="t" style="font-size:16.67px;color:#a9b7c6;font-family:'Liberation Mono', monospace;left:427px;top:180.22px;-webkit-text-stroke:0.25px #a9b7c6;">(i ==</span>
<span class="t" style="font-size:16.67px;color:#6897bb;font-family:'Liberation Mono', monospace;left:487px;top:180.22px;-webkit-text-stroke:0.25px #6897bb;">0</span>
<span class="t" style="font-size:16.67px;color:#a9b7c6;font-family:'Liberation Mono', monospace;left:497px;top:180.22px;-webkit-text-stroke:0.25px #a9b7c6;">){</span>
<div style="left:1039.5px;top:203px;width:26px;height:22.5px;background:#343536;border-radius:4px;"></div>
<span class="t" style="font-size:14.2px;color:#7d7d7d;letter-spacing:-0.33px;left:1045.5px;top:207.98px;">st:</span>
<div style="left:1099.5px;top:203px;width:36px;height:22.5px;background:#343536;border-radius:4px;"></div>
<span class="t" style="font-size:14.2px;color:#7d7d7d;left:1105.5px;top:207.98px;"></span>
<span class="t" style="font-size:16.67px;color:#cc7832;font-family:'Liberation Mono', monospace;left:437px;top:207.72px;-webkit-text-stroke:0.25px #cc7832;">if</span>
<span class="t" style="font-size:16.67px;color:#a9b7c6;font-family:'Liberation Mono', monospace;left:467px;top:207.72px;-webkit-text-stroke:0.25px #a9b7c6;">(displayText.</span>
<span class="t" style="font-size:16.67px;color:#9876aa;font-family:'Liberation Mono', monospace;font-style:italic;left:597px;top:207.72px;-webkit-text-stroke:0.25px #9876aa;">text</span>
<span class="t" style="font-size:16.67px;color:#a9b7c6;font-family:'Liberation Mono', monospace;left:637px;top:207.72px;-webkit-text-stroke:0.25px #a9b7c6;">.get(</span>
<span class="t" style="font-size:16.67px;color:#6897bb;font-family:'Liberation Mono', monospace;left:687px;top:207.72px;-webkit-text-stroke:0.25px #6897bb;">0</span>
<span class="t" style="font-size:16.67px;color:#a9b7c6;font-family:'Liberation Mono', monospace;left:697px;top:207.72px;-webkit-text-stroke:0.25px #a9b7c6;">) ==</span>
<span class="t" style="font-size:16.67px;color:#6a8759;font-family:'Liberation Mono', monospace;left:747px;top:207.72px;-webkit-text-stroke:0.25px #6a8759;">'+'</span>
<span class="t" style="font-size:16.67px;color:#a9b7c6;font-family:'Liberation Mono', monospace;left:777px;top:207.72px;-webkit-text-stroke:0.25px #a9b7c6;">) displayText.</span>
<span class="t" style="font-size:16.67px;color:#9876aa;font-family:'Liberation Mono', monospace;font-style:italic;left:917px;top:207.72px;-webkit-text-stroke:0.25px #9876aa;">text</span>
<span class="t" style="font-size:16.67px;color:#a9b7c6;font-family:'Liberation Mono', monospace;left:957px;top:207.72px;-webkit-text-stroke:0.25px #a9b7c6;">.delete(</span>
<span class="t" style="font-size:16.67px;color:#6897bb;font-family:'Liberation Mono', monospace;left:1067px;top:207.72px;-webkit-text-stroke:0.25px #6897bb;">0</span>
<span class="t" style="font-size:16.67px;color:#cc7832;font-family:'Liberation Mono', monospace;left:1077px;top:207.72px;-webkit-text-stroke:0.25px #cc7832;">,</span>
<span class="t" style="font-size:16.67px;color:#a9b7c6;font-family:'Liberation Mono', monospace;left:397px;top:235.22px;-webkit-text-stroke:0.25px #a9b7c6;">}</span>
<span class="t" style="font-size:16.67px;color:#cc7832;font-family:'Liberation Mono', monospace;left:397px;top:262.72px;-webkit-text-stroke:0.25px #cc7832;">else</span>
<span class="t" style="font-size:16.67px;color:#a9b7c6;font-family:'Liberation Mono', monospace;left:447px;top:262.72px;-webkit-text-stroke:0.25px #a9b7c6;">{</span>
<span class="t" style="font-size:16.67px;color:#cc7832;font-family:'Liberation Mono', monospace;left:437px;top:290.22px;-webkit-text-stroke:0.25px #cc7832;">if</span>
<span class="t" style="font-size:16.67px;color:#a9b7c6;font-family:'Liberation Mono', monospace;left:467px;top:290.22px;-webkit-text-stroke:0.25px #a9b7c6;">(displayText.</span>
<span class="t" style="font-size:16.67px;color:#9876aa;font-family:'Liberation Mono', monospace;font-style:italic;left:597px;top:290.22px;-webkit-text-stroke:0.25px #9876aa;">text</span>
<span class="t" style="font-size:16.67px;color:#a9b7c6;font-family:'Liberation Mono', monospace;left:637px;top:290.22px;-webkit-text-stroke:0.25px #a9b7c6;">.get(i -</span>
<span class="t" style="font-size:16.67px;color:#6897bb;font-family:'Liberation Mono', monospace;left:727px;top:290.22px;-webkit-text-stroke:0.25px #6897bb;">1</span>
<span class="t" style="font-size:16.67px;color:#a9b7c6;font-family:'Liberation Mono', monospace;left:737px;top:290.22px;-webkit-text-stroke:0.25px #a9b7c6;">) ==</span>
<span class="t" style="font-size:16.67px;color:#6a8759;font-family:'Liberation Mono', monospace;left:787px;top:290.22px;-webkit-text-stroke:0.25px #6a8759;">'+'</span>
<span class="t" style="font-size:16.67px;color:#a9b7c6;font-family:'Liberation Mono', monospace;left:477px;top:317.72px;-webkit-text-stroke:0.25px #a9b7c6;">|| displayText.</span>
<span class="t" style="font-size:16.67px;color:#9876aa;font-family:'Liberation Mono', monospace;font-style:italic;left:627px;top:317.72px;-webkit-text-stroke:0.25px #9876aa;">text</span>
<span class="t" style="font-size:16.67px;color:#a9b7c6;font-family:'Liberation Mono', monospace;left:667px;top:317.72px;-webkit-text-stroke:0.25px #a9b7c6;">.get(i -</span>
<span class="t" style="font-size:16.67px;color:#6897bb;font-family:'Liberation Mono', monospace;left:757px;top:317.72px;-webkit-text-stroke:0.25px #6897bb;">1</span>
<span class="t" style="font-size:16.67px;color:#a9b7c6;font-family:'Liberation Mono', monospace;left:767px;top:317.72px;-webkit-text-stroke:0.25px #a9b7c6;">) ==</span>
<span class="t" style="font-size:16.67px;color:#6a8759;font-family:'Liberation Mono', monospace;left:817px;top:317.72px;-webkit-text-stroke:0.25px #6a8759;">'x'</span>
<span class="t" style="font-size:16.67px;color:#a9b7c6;font-family:'Liberation Mono', monospace;left:477px;top:345.22px;-webkit-text-stroke:0.25px #a9b7c6;">|| displayText.</span>
<span class="t" style="font-size:16.67px;color:#9876aa;font-family:'Liberation Mono', monospace;font-style:italic;left:627px;top:345.22px;-webkit-text-stroke:0.25px #9876aa;">text</span>
<span class="t" style="font-size:16.67px;color:#a9b7c6;font-family:'Liberation Mono', monospace;left:667px;top:345.22px;-webkit-text-stroke:0.25px #a9b7c6;">.get(i -</span>
<span class="t" style="font-size:16.67px;color:#6897bb;font-family:'Liberation Mono', monospace;left:757px;top:345.22px;-webkit-text-stroke:0.25px #6897bb;">1</span>
<span class="t" style="font-size:16.67px;color:#a9b7c6;font-family:'Liberation Mono', monospace;left:767px;top:345.22px;-webkit-text-stroke:0.25px #a9b7c6;">) ==</span>
<span class="t" style="font-size:16.67px;color:#6a8759;font-family:'Liberation Mono', monospace;left:817px;top:345.22px;-webkit-text-stroke:0.25px #6a8759;">'/'</span>
<span class="t" style="font-size:16.67px;color:#a9b7c6;font-family:'Liberation Mono', monospace;left:857px;top:345.22px;-webkit-text-stroke:0.25px #a9b7c6;">) displayText.</span>
<span class="t" style="font-size:16.67px;color:#9876aa;font-family:'Liberation Mono', monospace;font-style:italic;left:997px;top:345.22px;-webkit-text-stroke:0.25px #9876aa;">text</span>
<span class="t" style="font-size:16.67px;color:#a9b7c6;font-family:'Liberation Mono', monospace;left:1037px;top:345.22px;-webkit-text-stroke:0.25px #a9b7c6;">.delete(</span>
<span class="t" style="font-size:16.67px;color:#a9b7c6;font-family:'Liberation Mono', monospace;left:397px;top:372.72px;-webkit-text-stroke:0.25px #a9b7c6;">}</span>
<span class="t" style="font-size:16.67px;color:#a9b7c6;font-family:'Liberation Mono', monospace;left:357px;top:400.22px;-webkit-text-stroke:0.25px #a9b7c6;">}</span>
<span class="t" style="font-size:16.67px;color:#cc7832;font-family:'Liberation Mono', monospace;left:357px;top:427.72px;-webkit-text-stroke:0.25px #cc7832;">return</span>
<span class="t" style="font-size:16.67px;color:#467cda;font-family:'Liberation Mono', monospace;left:417px;top:427.72px;-webkit-text-stroke:0.25px #467cda;">@setOnClickListener</span>
<span class="t" style="font-size:16.67px;color:#a9b7c6;font-family:'Liberation Mono', monospace;left:317px;top:455.22px;-webkit-text-stroke:0.25px #a9b7c6;">}</span>
<span class="t" style="font-size:16.67px;color:#a9b7c6;font-family:'Liberation Mono', monospace;left:277px;top:482.72px;-webkit-text-stroke:0.25px #a9b7c6;">}</span>
<div style="left:520px;top:533px;width:54px;height:22.5px;background:#343536;border-radius:4px;"></div>
<span class="t" style="font-size:14.2px;color:#7d7d7d;letter-spacing:-0.27px;left:526.5px;top:537.98px;">where:</span>
<div style="left:609.5px;top:533px;width:40px;height:22.5px;background:#343536;border-radius:4px;"></div>
<span class="t" style="font-size:14.2px;color:#7d7d7d;letter-spacing:0.04px;left:616px;top:537.98px;">text:</span>
<span class="t" style="font-size:16.67px;color:#a9b7c6;font-family:'Liberation Mono', monospace;left:277px;top:537.72px;-webkit-text-stroke:0.25px #a9b7c6;">displayText.</span>
<span class="t" style="font-size:16.67px;color:#9876aa;font-family:'Liberation Mono', monospace;font-style:italic;left:397px;top:537.72px;-webkit-text-stroke:0.25px #9876aa;">text</span>
<span class="t" style="font-size:16.67px;color:#a9b7c6;font-family:'Liberation Mono', monospace;left:437px;top:537.72px;-webkit-text-stroke:0.25px #a9b7c6;">.insert(</span>
<span class="t" style="font-size:16.67px;color:#6897bb;font-family:'Liberation Mono', monospace;left:577px;top:537.72px;-webkit-text-stroke:0.25px #6897bb;">0</span>
<span class="t" style="font-size:16.67px;color:#cc7832;font-family:'Liberation Mono', monospace;left:587px;top:537.72px;-webkit-text-stroke:0.25px #cc7832;">,</span>
<span class="t" style="font-size:16.67px;color:#6a8759;font-family:'Liberation Mono', monospace;left:652px;top:537.72px;-webkit-text-stroke:0.25px #6a8759;">"-"</span>
<span class="t" style="font-size:16.67px;color:#a9b7c6;font-family:'Liberation Mono', monospace;left:682px;top:537.72px;-webkit-text-stroke:0.25px #a9b7c6;">)</span>
<span class="t" style="font-size:16.67px;color:#a9b7c6;font-family:'Liberation Mono', monospace;left:237px;top:565.22px;-webkit-text-stroke:0.25px #a9b7c6;">}</span>
<span class="t" style="font-size:16.67px;color:#a9b7c6;font-family:'Liberation Mono', monospace;left:197px;top:592.72px;-webkit-text-stroke:0.25px #a9b7c6;">}</span>
<span class="t" style="font-size:16.67px;color:#a9b7c6;font-family:'Liberation Mono', monospace;left:207px;top:592.72px;-webkit-text-stroke:0.25px #a9b7c6;">)</span>
<div style="left:568.5px;top:646.5px;width:69px;height:17.5px;background:#343536;border-radius:4px;"></div>
<span class="t" style="font-size:14.2px;color:#7d7d7d;letter-spacing:0.17px;left:577.5px;top:647.98px;">it: View!</span>
<span class="t" style="font-size:16.67px;color:#9876aa;font-family:'Liberation Mono', monospace;left:197px;top:647.72px;-webkit-text-stroke:0.25px #9876aa;">binding</span>
<span class="t" style="font-size:16.67px;color:#a9b7c6;font-family:'Liberation Mono', monospace;left:267px;top:647.72px;-webkit-text-stroke:0.25px #a9b7c6;">.</span>
<span class="t" style="font-size:16.67px;color:#9876aa;font-family:'Liberation Mono', monospace;left:277px;top:647.72px;-webkit-text-stroke:0.25px #9876aa;">equalBTN</span>
<span class="t" style="font-size:16.67px;color:#a9b7c6;font-family:'Liberation Mono', monospace;left:357px;top:647.72px;-webkit-text-stroke:0.25px #a9b7c6;">.setOnClickListener({</span>
<div style="left:197px;top:662px;width:70px;height:1px;background:#9876aa;"></div>
<span class="t" style="font-size:16.67px;color:#808080;font-family:'Liberation Mono', monospace;left:237px;top:702.72px;-webkit-text-stroke:0.25px #808080;">//using exp4j to evaluate math expressions</span>
<span class="t" style="font-size:16.67px;color:#cc7832;font-family:'Liberation Mono', monospace;left:237px;top:730.22px;-webkit-text-stroke:0.25px #cc7832;">var</span>
<span class="t" style="font-size:16.67px;color:#a9b7c6;font-family:'Liberation Mono', monospace;left:277px;top:730.22px;-webkit-text-stroke:0.25px #a9b7c6;">expression = displayText.</span>
<span class="t" style="font-size:16.67px;color:#9876aa;font-family:'Liberation Mono', monospace;font-style:italic;left:527px;top:730.22px;-webkit-text-stroke:0.25px #9876aa;">text</span>
<span class="t" style="font-size:16.67px;color:#a9b7c6;font-family:'Liberation Mono', monospace;left:567px;top:730.22px;-webkit-text-stroke:0.25px #a9b7c6;">.toString()</span>
<span class="t" style="font-size:16.67px;color:#cc7832;font-family:'Liberation Mono', monospace;left:237px;top:785.22px;-webkit-text-stroke:0.25px #cc7832;">if</span>
<span class="t" style="font-size:16.67px;color:#a9b7c6;font-family:'Liberation Mono', monospace;left:267px;top:785.22px;-webkit-text-stroke:0.25px #a9b7c6;">(expression.</span>
<span class="t" style="font-size:16.67px;color:#ffc66d;font-family:'Liberation Mono', monospace;font-style:italic;left:387px;top:785.22px;-webkit-text-stroke:0.25px #ffc66d;">isNotEmpty</span>
<span class="t" style="font-size:16.67px;color:#a9b7c6;font-family:'Liberation Mono', monospace;left:487px;top:785.22px;-webkit-text-stroke:0.25px #a9b7c6;">()) {</span>
<div style="left:600px;top:808px;width:74px;height:22.5px;background:#343536;border-radius:4px;"></div>
<span class="t" style="font-size:14.2px;color:#7d7d7d;letter-spacing:0.43px;left:606px;top:812.98px;">oldValue:</span>
<div style="left:730px;top:808px;width:79px;height:22.5px;background:#343536;border-radius:4px;"></div>
<span class="t" style="font-size:14.2px;color:#7d7d7d;letter-spacing:0.2px;left:736px;top:812.98px;">newValue:</span>
<span class="t" style="font-size:16.67px;color:#a9b7c6;font-family:'Liberation Mono', monospace;left:277px;top:812.72px;-webkit-text-stroke:0.25px #a9b7c6;">expression = expression.</span>
<span class="t" style="font-size:16.67px;color:#ffc66d;font-family:'Liberation Mono', monospace;font-style:italic;left:517px;top:812.72px;-webkit-text-stroke:0.25px #ffc66d;">replace</span>
<span class="t" style="font-size:16.67px;color:#a9b7c6;font-family:'Liberation Mono', monospace;left:587px;top:812.72px;-webkit-text-stroke:0.25px #a9b7c6;">(</span>
<span class="t" style="font-size:16.67px;color:#6a8759;font-family:'Liberation Mono', monospace;left:677px;top:812.72px;-webkit-text-stroke:0.25px #6a8759;">"x"</span>
<span class="t" style="font-size:16.67px;color:#cc7832;font-family:'Liberation Mono', monospace;left:707px;top:812.72px;-webkit-text-stroke:0.25px #cc7832;">,</span>
<span class="t" style="font-size:16.67px;color:#6a8759;font-family:'Liberation Mono', monospace;left:812px;top:812.72px;-webkit-text-stroke:0.25px #6a8759;">"*"</span>
<span class="t" style="font-size:16.67px;color:#a9b7c6;font-family:'Liberation Mono', monospace;left:842px;top:812.72px;-webkit-text-stroke:0.25px #a9b7c6;">)</span>
<span class="t" style="font-size:16.67px;color:#cc7832;font-family:'Liberation Mono', monospace;left:277px;top:840.22px;-webkit-text-stroke:0.25px #cc7832;">val</span>
<span class="t" style="font-size:16.67px;color:#a9b7c6;font-family:'Liberation Mono', monospace;left:317px;top:840.22px;-webkit-text-stroke:0.25px #a9b7c6;">exp = ExpressionBuilder(expression).build().evaluate().toInt().toString()</span>
<span class="t" style="font-size:16.67px;color:#a9b7c6;font-family:'Liberation Mono', monospace;left:277px;top:867.72px;-webkit-text-stroke:0.25px #a9b7c6;">displayText.setText(exp)</span>
<span class="t" style="font-size:16.67px;color:#a9b7c6;font-family:'Liberation Mono', monospace;left:237px;top:895.22px;-webkit-text-stroke:0.25px #a9b7c6;">}</span>
<span class="t" style="font-size:16.67px;color:#a9b7c6;font-family:'Liberation Mono', monospace;left:197px;top:922.72px;-webkit-text-stroke:0.25px #a9b7c6;">}</span>
<span class="t" style="font-size:16.67px;color:#a9b7c6;font-family:'Liberation Mono', monospace;left:207px;top:922.72px;-webkit-text-stroke:0.25px #a9b7c6;">)</span>
<span class="t" style="font-size:16.67px;color:#a9b7c6;font-family:'Liberation Mono', monospace;left:157px;top:950.22px;-webkit-text-stroke:0.25px #a9b7c6;">}</span>
<span class="t" style="font-size:16.67px;color:#a9b7c6;font-family:'Liberation Mono', monospace;left:117px;top:977.72px;-webkit-text-stroke:0.25px #a9b7c6;">}</span>
<div style="left:117px;top:1001px;width:1.6px;height:22px;background:#bbbbbb;"></div>
<svg style="left:0px;top:0px;" width="1920" height="1080" viewBox="0 0 1920 1080"><defs><pattern id="wv" width="3.5" height="3" patternUnits="userSpaceOnUse"><path d="M-0.3 2.7 L1.75 0.4 L3.8 2.7" fill="none" stroke="#b2b284" stroke-width="1.1"/></pattern></defs><g transform="translate(117 112)"><rect x="0" y="0" width="250" height="3" fill="url(#wv)"/></g><g transform="translate(117 140)"><rect x="0" y="0" width="300" height="2.2" fill="url(#wv)"/></g><g transform="translate(117 167)"><rect x="0" y="0" width="560" height="3" fill="url(#wv)"/></g><g transform="translate(712 167)"><rect x="0" y="0" width="70" height="3" fill="url(#wv)"/></g><g transform="translate(827 167)"><rect x="0" y="0" width="40" height="3" fill="url(#wv)"/></g><g transform="translate(117 195)"><rect x="0" y="0" width="400" height="2.2" fill="url(#wv)"/></g><g transform="translate(117 222)"><rect x="0" y="0" width="920" height="3" fill="url(#wv)"/></g><g transform="translate(1067 222)"><rect x="0" y="0" width="30" height="3" fill="url(#wv)"/></g><g transform="translate(117 250)"><rect x="0" y="0" width="290" height="2.2" fill="url(#wv)"/></g><g transform="translate(117 277)"><rect x="0" y="0" width="340" height="3" fill="url(#wv)"/></g><g transform="translate(117 305)"><rect x="0" y="0" width="700" height="2.2" fill="url(#wv)"/></g><g transform="translate(117 332)"><rect x="0" y="0" width="730" height="3" fill="url(#wv)"/></g><g transform="translate(117 360)"><rect x="0" y="0" width="1000" height="2.2" fill="url(#wv)"/></g><g transform="translate(117 387)"><rect x="0" y="0" width="290" height="3" fill="url(#wv)"/></g><g transform="translate(117 415)"><rect x="0" y="0" width="250" height="2.2" fill="url(#wv)"/></g><g transform="translate(117 442)"><rect x="0" y="0" width="490" height="3" fill="url(#wv)"/></g><g transform="translate(117 470)"><rect x="0" y="0" width="210" height="2.2" fill="url(#wv)"/></g><g transform="translate(117 497)"><rect x="0" y="0" width="170" height="3" fill="url(#wv)"/></g><g transform="translate(117 552)"><rect x="0" y="0" width="400" height="3" fill="url(#wv)"/></g><g transform="translate(577 552)"><rect x="0" y="0" width="30" height="3" fill="url(#wv)"/></g><g transform="translate(652 552)"><rect x="0" y="0" width="40" height="3" fill="url(#wv)"/></g><g transform="translate(117 580)"><rect x="0" y="0" width="130" height="2.2" fill="url(#wv)"/></g><g transform="translate(117 607)"><rect x="0" y="0" width="90" height="3" fill="url(#wv)"/></g><g transform="translate(557 662)"><rect x="0" y="0" width="10" height="3" fill="url(#wv)"/></g><g transform="translate(577 670)"><rect x="0" y="0" width="52" height="3" fill="url(#wv)"/></g><g transform="translate(117 717)"><rect x="0" y="0" width="540" height="3" fill="url(#wv)"/></g><g transform="translate(117 745)"><rect x="0" y="0" width="560" height="2.2" fill="url(#wv)"/></g><g transform="translate(117 800)"><rect x="0" y="0" width="420" height="2.2" fill="url(#wv)"/></g><g transform="translate(117 827)"><rect x="0" y="0" width="480" height="3" fill="url(#wv)"/></g><g transform="translate(677 827)"><rect x="0" y="0" width="50" height="3" fill="url(#wv)"/></g><g transform="translate(812 827)"><rect x="0" y="0" width="40" height="3" fill="url(#wv)"/></g><g transform="translate(117 855)"><rect x="0" y="0" width="930" height="2.2" fill="url(#wv)"/></g><g transform="translate(117 882)"><rect x="0" y="0" width="400" height="3" fill="url(#wv)"/></g><g transform="translate(117 910)"><rect x="0" y="0" width="130" height="2.2" fill="url(#wv)"/></g><g transform="translate(117 937)"><rect x="0" y="0" width="90" height="3" fill="url(#wv)"/></g></svg>
<div style="left:1875px;top:223px;width:17px;height:2px;background:#c9a227;"></div>
<div style="left:1875px;top:238.3px;width:17px;height:36.7px;background:#756d56;"></div>
<div style="left:1875px;top:285px;width:17px;height:16.7px;background:#756d56;"></div>
<div style="left:1875px;top:311.7px;width:17px;height:16.6px;background:#756d56;"></div>
<div style="left:1875px;top:337.3px;width:17px;height:16.7px;background:#756d56;"></div>
<div style="left:1875px;top:364px;width:17px;height:14.3px;background:#756d56;"></div>
<div style="left:1875px;top:390px;width:17px;height:15px;background:#756d56;"></div>
<div style="left:1875px;top:416.7px;width:17px;height:15px;background:#756d56;"></div>
<div style="left:1875px;top:442.7px;width:17px;height:15px;background:#756d56;"></div>
<div style="left:1875px;top:469px;width:17px;height:15px;background:#756d56;"></div>
<div style="left:1875px;top:495px;width:17px;height:15px;background:#756d56;"></div>
<div style="left:1875px;top:521px;width:17px;height:26.7px;background:#756d56;"></div>
<div style="left:1875px;top:557.7px;width:17px;height:26.3px;background:#756d56;"></div>
<div style="left:1875px;top:594px;width:17px;height:26px;background:#756d56;"></div>
<div style="left:1875px;top:631px;width:17px;height:26.7px;background:#756d56;"></div>
<div style="left:1875px;top:667.7px;width:17px;height:57.3px;background:#756d56;"></div>
<div style="left:1875px;top:736px;width:17px;height:10.7px;background:#756d56;"></div>
<div style="left:1875px;top:757.7px;width:17px;height:15px;background:#756d56;"></div>
<div style="left:1875px;top:784px;width:17px;height:124.3px;background:#756d56;"></div>
<div style="left:1875px;top:920px;width:17px;height:52.3px;background:#756d56;"></div>
<div style="left:1881px;top:819.5px;width:10px;height:172px;background:rgba(255,255,255,0.22);"></div>
<svg style="left:1762px;top:116px;" width="15" height="14" viewBox="0 0 15 14"><path d="M7.5 0.3 L14.8 13.7 H0.2 Z" fill="#cf9f24"/><rect x="6.6" y="4.5" width="1.8" height="5" fill="#2b2b2b"/><rect x="6.6" y="10.6" width="1.8" height="1.8" fill="#2b2b2b"/></svg>
<span class="t" style="font-size:15.2px;color:#bbbbbb;left:1780px;top:116.13px;">6</span>
<svg style="left:1798px;top:116px;" width="15" height="14" viewBox="0 0 15 14"><path d="M7.5 0.3 L14.8 13.7 H0.2 Z" fill="#8a8266"/><rect x="6.6" y="4.5" width="1.8" height="5" fill="#2b2b2b"/><rect x="6.6" y="10.6" width="1.8" height="1.8" fill="#2b2b2b"/></svg>
<span class="t" style="font-size:15.2px;color:#bbbbbb;letter-spacing:-0.45px;left:1816px;top:116.13px;">34</span>
<svg style="left:1846px;top:119px;" width="11" height="7" viewBox="0 0 11 7"><path d="M0.7 6.3 L5.5 1.2 L10.3 6.3" fill="none" stroke="#bbbbbb" stroke-width="1.5"/></svg>
<svg style="left:1873px;top:120px;" width="11" height="7" viewBox="0 0 11 7"><path d="M0.7 0.7 L5.5 5.8 L10.3 0.7" fill="none" stroke="#bbbbbb" stroke-width="1.5"/></svg>
</div></div>
<div style="left:0px;top:72px;width:26px;height:953px;background:#3c3f41;"></div>
<div style="left:26px;top:72px;width:1px;height:953px;background:#323232;"></div>
<div style="left:1893px;top:72px;width:27px;height:953px;background:#3c3f41;"></div>
<div style="left:1892px;top:72px;width:1px;height:953px;background:#323232;"></div>
<div style="left:1893px;top:879px;width:27px;height:146px;background:#2d2f30;"></div>
<span class="t" style="font-size:13.4px;color:#bbbbbb;letter-spacing:-0.21px;left:8.46px;top:198px;transform-origin:0 0;transform:rotate(-90deg);">Resource Manager</span>
<svg style="left:8px;top:204px;" width="15" height="15" viewBox="0 0 15 15"><path d="M7.5 0.5 L11 6.5 H4 Z" fill="#afb1b3"/><rect x="0.5" y="8" width="6.5" height="6.5" fill="#afb1b3"/><circle cx="11.5" cy="11.2" r="3.4" fill="#afb1b3"/></svg>
<span class="t" style="font-size:13.4px;color:#bbbbbb;letter-spacing:-0.38px;left:8.46px;top:285px;transform-origin:0 0;transform:rotate(-90deg);">Project</span>
<svg style="left:7px;top:293px;" width="16" height="13" viewBox="0 0 16 13"><path d="M0 0 H6 L8 2.5 H16 V13 H0 Z" fill="#afb1b3"/></svg>
<span class="t" style="font-size:13.4px;color:#bbbbbb;letter-spacing:-0.27px;left:8.46px;top:375.5px;transform-origin:0 0;transform:rotate(-90deg);">Commit</span>
<svg style="left:6px;top:382px;" width="18" height="13" viewBox="0 0 18 13"><path d="M0 6.5 H18" stroke="#afb1b3" stroke-width="2"/><circle cx="9" cy="6.5" r="4.3" fill="#3c3f41" stroke="#afb1b3" stroke-width="2.4"/></svg>
<span class="t" style="font-size:13.4px;color:#bbbbbb;letter-spacing:-0.47px;left:8.46px;top:501px;transform-origin:0 0;transform:rotate(-90deg);">Pull Requests</span>
<svg style="left:8px;top:508px;" width="14" height="14" viewBox="0 0 14 14"><path d="M1.2 0 V14" stroke="#afb1b3" stroke-width="2.2"/><path d="M12.5 14 V6.5 H5" fill="none" stroke="#afb1b3" stroke-width="2.2"/><path d="M8.5 2 L3.5 6.5 L8.5 11 Z" fill="#afb1b3"/></svg>
<span class="t" style="font-size:13.4px;color:#bbbbbb;letter-spacing:-0.33px;left:8.46px;top:763px;transform-origin:0 0;transform:rotate(-90deg);">Bookmarks</span>
<svg style="left:9px;top:768px;" width="12" height="15" viewBox="0 0 12 15"><path d="M0 0 H12 V15 L6 10.5 L0 15 Z" fill="#afb1b3"/></svg>
<span class="t" style="font-size:13.4px;color:#bbbbbb;letter-spacing:-0.19px;left:8.46px;top:890px;transform-origin:0 0;transform:rotate(-90deg);">Build Variants</span>
<svg style="left:7px;top:896px;" width="16" height="12" viewBox="0 0 16 12"><path d="M0 12 A8 8.5 0 0 1 16 12 Z" fill="#afb1b3"/><path d="M2.5 0.5 L5 4.5 M13.5 0.5 L11 4.5" stroke="#afb1b3" stroke-width="1.3"/><circle cx="4.8" cy="8.3" r="0.9" fill="#3c3f41"/><circle cx="11.2" cy="8.3" r="0.9" fill="#3c3f41"/></svg>
<span class="t" style="font-size:13.4px;color:#bbbbbb;letter-spacing:-0.26px;left:8.46px;top:990px;transform-origin:0 0;transform:rotate(-90deg);">Structure</span>
<svg style="left:8.5px;top:997.5px;" width="12" height="12" viewBox="0 0 14 14"><rect x="8" y="0" width="6" height="6" fill="#afb1b3"/><rect x="0" y="8" width="6" height="6" fill="#afb1b3"/><rect x="8" y="8" width="6" height="6" fill="#afb1b3"/></svg>
<svg style="left:1898.5px;top:87px;" width="17" height="17" viewBox="0 0 17 17"><path d="M2 0 H9.5 Q10.5 0 10.5 1 V15 Q10.5 16 9.5 16 H2 Q1 16 1 15 V1 Q1 0 2 0 Z M2.6 3 V12.5 H8.9 V3 Z" fill="#afb1b3" fill-rule="evenodd"/><path d="M5.8 16.5 A5.3 5.3 0 0 1 16.4 16.5 Z" fill="#afb1b3" stroke="#3c3f41" stroke-width="1"/><path d="M7.8 9.8 L9.2 12 M14.4 9.8 L13 12" stroke="#afb1b3" stroke-width="1.1"/></svg>
<span class="t" style="font-size:13.4px;color:#bbbbbb;letter-spacing:-0.25px;left:1910.94px;top:109px;transform-origin:0 0;transform:rotate(90deg);">Device Manager</span>
<svg style="left:1899px;top:233px;" width="16" height="16" viewBox="0 0 16 16"><path d="M2 11.5 Q3.5 10 3.5 6.5 Q3.5 2 8 1.5 Q12.5 2 12.5 6.5 Q12.5 10 14 11.5 Z" fill="#afb1b3"/><rect x="6" y="12.7" width="4" height="2.2" fill="#afb1b3"/><circle cx="12.7" cy="3.3" r="3" fill="#db5860"/></svg>
<span class="t" style="font-size:13.4px;color:#bbbbbb;left:1910.94px;top:253px;transform-origin:0 0;transform:rotate(90deg);">Notifications</span>
<svg style="left:1900px;top:353px;" width="13" height="11" viewBox="0 0 13 11"><path d="M0 1.2 H2.6 M4.2 1.2 H13 M0 5.5 H2.6 M4.2 5.5 H13 M0 9.8 H2.6 M4.2 9.8 H13" stroke="#afb1b3" stroke-width="2.3"/></svg>
<span class="t" style="font-size:13.4px;color:#bbbbbb;letter-spacing:-0.26px;left:1910.94px;top:372px;transform-origin:0 0;transform:rotate(90deg);">Assistant</span>
<svg style="left:1898px;top:449px;" width="17" height="12" viewBox="0 0 20.5 14"><path d="M1 13 V8 Q1 3 6 3 H10 Q11 0.8 14 1 Q16.5 1.2 17 3.5 Q17.3 5 16 5.8 Q17.5 6 18.3 4.8 Q19 3.5 18 2.6 L18.8 1.6 Q20.3 3 19.6 5.2 Q18.5 7.8 15.5 7.6 Q14 9.5 12 9.8 V13 H9.5 V10.5 H6 V13 H3.5 V10 Q3 11 3 13 Z" fill="#afb1b3"/></svg>
<span class="t" style="font-size:13.4px;color:#bbbbbb;letter-spacing:-0.37px;left:1910.94px;top:470px;transform-origin:0 0;transform:rotate(90deg);">Gradle</span>
<svg style="left:1900px;top:751px;" width="12" height="16" viewBox="0 0 12 16"><rect x="1" y="1" width="10" height="14" rx="1.5" fill="#3c3f41" stroke="#afb1b3" stroke-width="1.8"/><rect x="4" y="12.2" width="4" height="1.2" fill="#afb1b3"/></svg>
<span class="t" style="font-size:13.4px;color:#bbbbbb;letter-spacing:-0.3px;left:1910.94px;top:773px;transform-origin:0 0;transform:rotate(90deg);">Device Explorer</span>
<svg style="left:1899px;top:894px;" width="17" height="17" viewBox="0 0 17 17"><rect x="1" y="1" width="9" height="13" rx="1.5" fill="none" stroke="#afb1b3" stroke-width="1.6"/><rect x="8" y="9" width="7" height="6" fill="#2d2f30" stroke="#afb1b3" stroke-width="1.2"/><circle cx="13.8" cy="14" r="2.5" fill="#00e600"/></svg>
<span class="t" style="font-size:13.4px;color:#e8e8e8;letter-spacing:-0.48px;left:1910.94px;top:916px;transform-origin:0 0;transform:rotate(90deg);">Running Devices</span>
<div style="left:0px;top:1025px;width:1920px;height:29px;background:#3c3f41;"></div>
<div style="left:0px;top:1025px;width:1920px;height:1px;background:#323232;"></div>
<div style="left:0px;top:1053px;width:1920px;height:1px;background:#2f3133;"></div>
<div style="left:0px;top:1054px;width:1920px;height:24px;background:#3c3f41;"></div>
<div style="left:0px;top:1078px;width:1920px;height:2px;background:#d2d2d2;"></div>
<div style="left:60px;top:1078px;width:359px;height:2px;background:#fdfdfd;"></div>
<div style="left:732px;top:1078px;width:60px;height:2px;background:#fdfdfd;"></div>
<svg style="left:40px;top:1033px;" width="11" height="15" viewBox="0 0 11 15"><path d="M2.2 2 V13 M2.2 9.5 Q8.8 9 8.8 4.5" fill="none" stroke="#afb1b3" stroke-width="1.7"/><circle cx="2.2" cy="2.2" r="2" fill="#afb1b3"/><circle cx="2.2" cy="12.8" r="2" fill="#afb1b3"/><circle cx="8.8" cy="3.6" r="2" fill="#afb1b3"/></svg>
<span class="t" style="font-size:13.4px;color:#bbbbbb;letter-spacing:-0.38px;left:59px;top:1034.16px;">Git</span>
<svg style="left:101px;top:1034px;" width="16" height="14" viewBox="0 0 16 14"><path d="M0.5 0 L10.5 6 L0.5 12 Z" fill="#afb1b3"/><circle cx="12.3" cy="11" r="2.4" fill="#00e600"/></svg>
<span class="t" style="font-size:13.4px;color:#bbbbbb;letter-spacing:-0.86px;left:120px;top:1034.16px;">Run</span>
<svg style="left:166px;top:1034px;" width="17" height="12" viewBox="0 0 17 12"><path d="M1.8 11 A6.9 6.9 0 1 1 15.2 11" fill="none" stroke="#afb1b3" stroke-width="2.7"/><path d="M8 10.5 L11.2 3.5" stroke="#afb1b3" stroke-width="2.2"/></svg>
<span class="t" style="font-size:13.4px;color:#bbbbbb;letter-spacing:-0.05px;left:188px;top:1034.16px;">Profiler</span>
<svg style="left:255px;top:1035px;" width="14" height="11" viewBox="0 0 14 11"><path d="M0 1 H14 M0 5.5 H9 M0 10 H12" stroke="#afb1b3" stroke-width="2"/></svg>
<span class="t" style="font-size:13.4px;color:#bbbbbb;letter-spacing:-0.2px;left:275px;top:1034.16px;">Logcat</span>
<svg style="left:341px;top:1032px;" width="16" height="15" viewBox="0 0 16 15"><path d="M4 0.7 H12 L15.3 5 L8 14.3 L0.7 5 Z M0.7 5 H15.3 M4 0.7 L5.7 5 L8 14.3 L10.3 5 L12 0.7 M8 0.7 L5.7 5 M8 0.7 L10.3 5" fill="none" stroke="#afb1b3" stroke-width="1.1"/></svg>
<span class="t" style="font-size:13.4px;color:#bbbbbb;letter-spacing:-0.2px;left:363px;top:1034.16px;">App Quality Insights</span>
<svg style="left:507px;top:1032px;" width="16" height="16" viewBox="0 0 16 16"><path d="M0.5 6 L5 1 L8.5 0.5 L10.5 2.5 L8 3.8 L7.5 5.5 L15.5 13.5 L13.5 15.5 L5.5 7.5 L3 9.5 Z" fill="#afb1b3"/></svg>
<span class="t" style="font-size:13.4px;color:#bbbbbb;letter-spacing:-0.36px;left:529px;top:1034.16px;">Build</span>
<svg style="left:581px;top:1035px;" width="13" height="11" viewBox="0 0 13 11"><path d="M0 1.2 H2.6 M4.2 1.2 H13 M0 5.5 H2.6 M4.2 5.5 H13 M0 9.8 H2.6 M4.2 9.8 H13" stroke="#afb1b3" stroke-width="2.2"/></svg>
<span class="t" style="font-size:13.4px;color:#bbbbbb;letter-spacing:-0.61px;left:600px;top:1034.16px;">TODO</span>
<svg style="left:662px;top:1033px;" width="14" height="14" viewBox="0 0 14 14"><circle cx="7" cy="7" r="7" fill="#afb1b3"/><rect x="6" y="3" width="2" height="5.2" fill="#3c3f41"/><rect x="6" y="9.4" width="2" height="2" fill="#3c3f41"/></svg>
<span class="t" style="font-size:13.4px;color:#bbbbbb;letter-spacing:-0.2px;left:683px;top:1034.16px;">Problems</span>
<svg style="left:765px;top:1034px;" width="14" height="13" viewBox="0 0 14 13"><rect x="0" y="0" width="14" height="13" rx="1" fill="#afb1b3"/><path d="M2.5 3.5 L5.5 6.5 L2.5 9.5 M7 10 H11.5" fill="none" stroke="#3c3f41" stroke-width="1.4"/></svg>
<span class="t" style="font-size:13.4px;color:#bbbbbb;letter-spacing:-0.08px;left:785px;top:1034.16px;">Terminal</span>
<svg style="left:860px;top:1033px;" width="15" height="15" viewBox="0 0 15 15"><circle cx="7.5" cy="7.5" r="7.5" fill="#afb1b3"/><path d="M5.5 3.8 L11.5 7.5 L5.5 11.2 Z" fill="#3c3f41"/></svg>
<span class="t" style="font-size:13.4px;color:#bbbbbb;letter-spacing:-0.55px;left:881px;top:1034.16px;">Services</span>
<svg style="left:956px;top:1033px;" width="14" height="15" viewBox="0 0 14 15"><ellipse cx="7" cy="8.5" rx="4.3" ry="5.5" fill="#afb1b3"/><circle cx="7" cy="3" r="2.6" fill="#afb1b3"/><path d="M0.5 5.5 L3.5 7 M13.5 5.5 L10.5 7 M0 9.5 H3.5 M14 9.5 H10.5 M0.5 13.5 L3.5 12 M13.5 13.5 L10.5 12" stroke="#afb1b3" stroke-width="1.4"/></svg>
<span class="t" style="font-size:13.4px;color:#bbbbbb;letter-spacing:-0.11px;left:976px;top:1034.16px;">App Inspection</span>
<svg style="left:1760px;top:1033px;" width="17" height="15" viewBox="0 0 17 15"><path d="M0.7 9 V0.7 H11.5 M3.5 12 V3.5 H15.8 V8" fill="none" stroke="#afb1b3" stroke-width="1.3"/><circle cx="10.5" cy="9.5" r="3" fill="none" stroke="#afb1b3" stroke-width="1.5"/><path d="M12.7 11.7 L16 15" stroke="#afb1b3" stroke-width="1.7"/></svg>
<span class="t" style="font-size:13.4px;color:#bbbbbb;letter-spacing:-0.19px;left:1781px;top:1034.16px;">Layout Inspector</span>
<svg style="left:8px;top:1058px;" width="15" height="15" viewBox="0 0 15 15"><rect x="3.6" y="0.6" width="10.8" height="10.8" fill="none" stroke="#afb1b3" stroke-width="1.2"/><path d="M0.6 3.6 V14.4 H11.4" fill="none" stroke="#afb1b3" stroke-width="1.2"/></svg>
<span class="t" style="font-size:15.2px;color:#bbbbbb;letter-spacing:-0.28px;left:34px;top:1058.13px;">Install successfully finished in 2 s 320 ms. (3 minutes ago)</span>
<span class="t" style="font-size:15.2px;color:#bbbbbb;letter-spacing:-0.8px;left:1558px;top:1058.13px;">168:1</span>
<span class="t" style="font-size:15.2px;color:#bbbbbb;transform-origin:0 50%;transform:scaleX(0.8066);left:1608px;top:1058.13px;">CRLF</span>
<span class="t" style="font-size:15.2px;color:#bbbbbb;letter-spacing:-0.81px;left:1655px;top:1058.13px;">UTF-8</span>
<span class="t" style="font-size:15.2px;color:#bbbbbb;letter-spacing:-0.6px;left:1709px;top:1058.13px;">4 spaces</span>
<svg style="left:1783px;top:1058px;" width="12" height="16" viewBox="0 0 12 16"><path d="M2.4 2 V14 M2.4 10 Q9.6 9.5 9.6 4.5" fill="none" stroke="#afb1b3" stroke-width="1.8"/><circle cx="2.4" cy="2.3" r="2.1" fill="#afb1b3"/><circle cx="2.4" cy="13.7" r="2.1" fill="#afb1b3"/><circle cx="9.6" cy="3.6" r="2.1" fill="#afb1b3"/></svg>
<span class="t" style="font-size:15.2px;color:#bbbbbb;letter-spacing:-0.24px;left:1801px;top:1058.13px;">master</span>
<svg style="left:1859px;top:1058px;" width="15" height="15" viewBox="0 0 15 15"><rect x="4" y="7" width="10.5" height="7.5" fill="#afb1b3"/><path d="M1.3 7.5 V4.2 A2.8 2.8 0 0 1 6.9 4.2 V7.5" fill="none" stroke="#afb1b3" stroke-width="1.7"/></svg>
<svg style="left:1890px;top:1058px;" width="16" height="15" viewBox="0 0 16 15"><path d="M0.5 0.5 H15.5 V11 H6 L3 14 V11 H0.5 Z" fill="#afb1b3"/><rect x="7.1" y="2.5" width="1.9" height="4.3" fill="#3c3f41"/><rect x="7.1" y="7.8" width="1.9" height="1.8" fill="#3c3f41"/></svg>
<div style="left:1105px;top:79px;width:472px;height:891px;background:#3c3f41;"></div>
<div style="left:1105px;top:79px;width:472px;height:1px;background:#616365;"></div>
<div style="left:1105px;top:79px;width:1px;height:891px;background:#5a5c5e;"></div>
<div style="left:1576px;top:79px;width:1px;height:5px;background:#8a8c8e;"></div>
<div style="left:1109px;top:153px;width:465px;height:814.5px;background:#2d2f31;"></div>
<div style="left:1109px;top:117px;width:465px;height:1px;background:#2e3032;"></div>
<span class="t" style="font-size:14.6px;color:#bbbbbb;letter-spacing:-0.18px;left:1116.5px;top:94.34px;">Running Devices:</span>
<svg style="left:1258px;top:92px;" width="17" height="18" viewBox="0 0 17 18"><rect x="1" y="1" width="9" height="14" rx="1.5" fill="none" stroke="#afb1b3" stroke-width="1.6"/><rect x="8" y="10" width="7" height="6" fill="#3c3f41" stroke="#9876c8" stroke-width="1.2"/><circle cx="13.5" cy="15" r="2.6" fill="#00e600"/></svg>
<span class="t" style="font-size:14.6px;color:#bbbbbb;letter-spacing:-0.17px;left:1278.5px;top:94.34px;">Pixel 5 API 34</span>
<svg style="left:1375px;top:96px;" width="10" height="10" viewBox="0 0 10 10"><path d="M0.5 0.5 L9.5 9.5 M9.5 0.5 L0.5 9.5" stroke="#6e7173" stroke-width="1.2"/></svg>
<div style="left:1238px;top:114.3px;width:161px;height:3.4px;background:#7b8389;border-radius:2px;"></div>
<svg style="left:1485px;top:92px;" width="16" height="15" viewBox="0 0 16 15"><rect x="0.8" y="0.8" width="14.4" height="13.4" fill="none" stroke="#afb1b3" stroke-width="1.6"/><rect x="8.5" y="7.5" width="6.5" height="6.5" fill="#afb1b3"/></svg>
<svg style="left:1517px;top:91px;" width="17" height="17" viewBox="0 0 17 17"><g transform="translate(8.5 8.5)"><path d="M-2.6 -5 L-1.9 -8.4 H1.9 L2.6 -5 Z" transform="rotate(0)" fill="#afb1b3"/><path d="M-2.6 -5 L-1.9 -8.4 H1.9 L2.6 -5 Z" transform="rotate(60)" fill="#afb1b3"/><path d="M-2.6 -5 L-1.9 -8.4 H1.9 L2.6 -5 Z" transform="rotate(120)" fill="#afb1b3"/><path d="M-2.6 -5 L-1.9 -8.4 H1.9 L2.6 -5 Z" transform="rotate(180)" fill="#afb1b3"/><path d="M-2.6 -5 L-1.9 -8.4 H1.9 L2.6 -5 Z" transform="rotate(240)" fill="#afb1b3"/><path d="M-2.6 -5 L-1.9 -8.4 H1.9 L2.6 -5 Z" transform="rotate(300)" fill="#afb1b3"/><circle r="5.9" fill="#afb1b3"/><circle r="2.7" fill="#3c3f41"/></g></svg>
<div style="left:1550px;top:99px;width:16px;height:2px;background:#afb1b3;"></div>
<svg style="left:1120px;top:127px;" width="16" height="16" viewBox="0 0 16 16"><path d="M4.6 3.2 A6.4 6.4 0 1 0 11.4 3.2" fill="none" stroke="#afb1b3" stroke-width="2"/><path d="M8 0 V7.5" stroke="#afb1b3" stroke-width="2"/></svg>
<svg style="left:1152px;top:127px;" width="18" height="16" viewBox="0 0 18 16"><path d="M0 5 H4 L9 0.5 V15.5 L4 11 H0 Z" fill="#afb1b3"/><path d="M11 4.7 A3.6 3.6 0 0 1 11 11.3 Z" fill="#afb1b3"/><path d="M11 1.5 A6.6 6.6 0 0 1 11 14.5" fill="none" stroke="#afb1b3" stroke-width="1.3"/></svg>
<svg style="left:1186px;top:127px;" width="15" height="16" viewBox="0 0 15 16"><path d="M0 5 H4 L9 0.5 V15.5 L4 11 H0 Z" fill="#afb1b3"/><path d="M11 4.7 A3.6 3.6 0 0 1 11 11.3 Z" fill="#afb1b3"/></svg>
<svg style="left:1216px;top:127px;" width="19" height="16" viewBox="0 0 19 16"><rect x="1" y="1" width="7.5" height="14" rx="1.3" fill="none" stroke="#afb1b3" stroke-width="1.7"/><path d="M12 3 Q17 3.5 16.5 9 Q16 13 11.5 14.3" fill="none" stroke="#3592c4" stroke-width="2.2"/><path d="M11 0.3 L17 1.2 L12.3 5.5 Z" fill="#3592c4"/></svg>
<svg style="left:1249px;top:127px;" width="19" height="16" viewBox="0 0 19 16"><rect x="10.5" y="1" width="7.5" height="14" rx="1.3" fill="none" stroke="#afb1b3" stroke-width="1.7"/><path d="M7 3 Q2 3.5 2.5 9 Q3 13 7.5 14.3" fill="none" stroke="#3592c4" stroke-width="2.2"/><path d="M8 0.3 L2 1.2 L6.7 5.5 Z" fill="#3592c4"/></svg>
<svg style="left:1284px;top:129px;" width="12" height="12" viewBox="0 0 12 12"><path d="M12 0 V12 L0.5 6 Z" fill="#afb1b3"/></svg>
<div style="left:1317px;top:129.5px;width:11px;height:11px;background:#afb1b3;border-radius:50%;"></div>
<div style="left:1350px;top:130px;width:10px;height:10px;background:#afb1b3;"></div>
<svg style="left:1378px;top:126px;" width="19" height="17" viewBox="0 0 19 17"><path d="M2 3.5 H5.5 L7 1 H12 L13.5 3.5 H17 Q18.5 3.5 18.5 5 V14.5 Q18.5 16 17 16 H2 Q0.5 16 0.5 14.5 V5 Q0.5 3.5 2 3.5 Z" fill="#afb1b3"/><circle cx="9.5" cy="9.5" r="4" fill="#3c3f41"/><circle cx="9.5" cy="9.5" r="2.2" fill="#afb1b3"/></svg>
<svg style="left:1411px;top:129px;" width="19" height="12" viewBox="0 0 19 12"><rect x="0" y="0" width="12.5" height="12" rx="1.5" fill="#afb1b3"/><path d="M13 4.5 L19 0.8 V11.2 L13 7.5 Z" fill="#afb1b3"/></svg>
<svg style="left:1443px;top:126px;" width="19" height="18" viewBox="0 0 19 18"><path d="M3.4 5.6 A7.2 7.2 0 1 1 2.8 11.8" fill="none" stroke="#afb1b3" stroke-width="2.2"/><path d="M0 1.5 L7 3.2 L1.8 8.6 Z" fill="#afb1b3"/><path d="M12.5 7.6 H9.6 V11" fill="none" stroke="#afb1b3" stroke-width="1.5"/></svg>
<div style="left:1483.1px;top:127.6px;width:3.8px;height:3.8px;background:#afb1b3;border-radius:50%;"></div>
<div style="left:1483.1px;top:133.1px;width:3.8px;height:3.8px;background:#afb1b3;border-radius:50%;"></div>
<div style="left:1483.1px;top:138.6px;width:3.8px;height:3.8px;background:#afb1b3;border-radius:50%;"></div>
<div style="left:1143px;top:154.5px;width:393px;height:811px;background:linear-gradient(90deg,#6c6c6c 0,#666 80%,#3c3c3c 100%);border-radius:54px;"></div>
<div style="left:1144.6px;top:155.7px;width:390.8px;height:808.6px;background:#1d1d1d;border-radius:53px;"></div>
<div style="left:1148px;top:158.5px;width:385px;height:803px;background:#000;border-radius:50px;"></div>
<div style="left:1150px;top:161px;width:381px;height:798px;background:linear-gradient(90deg,#6a6a6a 0,#484848 6px,#2a2a2a 50%,#3a3a3a calc(100% - 8px),#5c5c5c calc(100% - 6px),#2c2c2c 100%);border-radius:48px;"></div>
<div style="left:1150px;top:161px;width:381px;height:798px;background:linear-gradient(180deg,rgba(0,0,0,0) 0,rgba(0,0,0,0) 80%,rgba(0,0,0,0.75) 93%,rgba(0,0,0,0.8) 100%);border-radius:48px;box-shadow:inset 0 5px 2px -1px #545454, inset 0 -4px 2px -1px #2c2c2c;"></div>
<div style="left:1156px;top:167px;width:369px;height:786px;background:#000;border-radius:42px;"></div>
<div style="left:1537.5px;top:351px;width:1.5px;height:50px;background:#3c3c3c;"></div>
<div style="left:1537px;top:350px;width:2px;height:3px;background:#cfcfcf;"></div>
<div style="left:1537.5px;top:460px;width:1.5px;height:110px;background:#1b1b1b;"></div>
<div style="left:1163px;top:175px;width:354px;height:770.5px;border-radius:31px;overflow:hidden;background:#000">
<div style="left:0px;top:0px;width:354px;height:45px;background:#767676;"></div>
<div style="left:0px;top:45px;width:354px;height:30.6px;background:#212121;"></div>
<div style="left:0px;top:75.6px;width:354px;height:4.4px;background:#fafafa;"></div>
<div style="left:0px;top:80px;width:354px;height:181px;background:#b4b4b4;"></div>
<div style="left:0px;top:261px;width:354px;height:486px;background:#fafafa;"></div>
<div style="left:128px;top:756px;width:97.5px;height:4px;background:#ffffff;border-radius:2px;"></div>
</div>
<div style="left:1174.6px;top:185.9px;width:24px;height:24px;background:radial-gradient(circle at 50% 50%, #1a1d24 0, #0b0c0f 45%, #050505 100%);border-radius:50%;"></div>
<div style="left:1183.6px;top:194.9px;width:6px;height:6px;background:#3a4a66;border-radius:50%;"></div>
<div style="left:1185.2px;top:196px;width:2.8px;height:2.2px;background:#9fb3d8;border-radius:50%;transform:rotate(-35deg);"></div>
<span class="t" style="font-size:13.2px;color:#f2f2f2;letter-spacing:-0.42px;left:1215px;top:191.83px;">7:04</span>
<svg style="left:1250px;top:193px;" width="9.3" height="11.3" viewBox="0 0 9.3 11.3"><path d="M3 0 H9.3 V11.3 H0 V3.2 Z" fill="#fafafa"/><path d="M4 1.4 V3 M5.6 1.4 V3 M7.2 1.4 V3" stroke="#777" stroke-width="0.8"/></svg>
<svg style="left:1268px;top:193px;" width="14" height="11" viewBox="0 0 14 11"><path d="M0 3 Q7 -2.5 14 3 L7 11 Z" fill="#a9a9a9" opacity="0.75"/></svg>
<span class="t" style="font-size:8px;color:#ffffff;font-weight:bold;left:1276.5px;top:197.43px;">?</span>
<svg style="left:1452px;top:192px;" width="15" height="12" viewBox="0 0 15 12"><path d="M0 3.2 Q7.5 -2.8 15 3.2 L7.5 12 Z" fill="#ffffff"/></svg>
<svg style="left:1467px;top:192.5px;" width="11.5" height="11.5" viewBox="0 0 11.5 11.5"><path d="M11.5 0 V11.5 H0 Z" fill="#ffffff"/></svg>
<svg style="left:1484.5px;top:192px;" width="8" height="12" viewBox="0 0 8 12"><path d="M2.6 0 H5.4 V1.5 H8 V12 H0 V1.5 H2.6 Z" fill="#ffffff"/></svg>
<span class="t" style="font-size:13.3px;color:#ffffff;letter-spacing:-0.52px;left:1163.8px;top:222.34px;">LifeCycle</span>
<span class="t" style="font-size:54.3px;color:#1a1a1a;letter-spacing:-2.45px;left:1458.3px;top:320.64px;">59</span>
<div style="left:1167.7px;top:446px;width:79px;height:86.6px;background:#b6b6b6;border-radius:6.5px;box-shadow:0 1.2px 2.2px rgba(0,0,0,0.28);"></div>
<span class="t" style="left:1167.7px;top:481.86px;width:79px;text-align:center;font-size:15.4px;color:#111;-webkit-text-stroke:0.22px #111;">CE</span>
<div style="left:1256.2px;top:446px;width:79px;height:86.6px;background:#b6b6b6;border-radius:6.5px;box-shadow:0 1.2px 2.2px rgba(0,0,0,0.28);"></div>
<span class="t" style="left:1256.2px;top:481.86px;width:79px;text-align:center;font-size:15.4px;color:#111;-webkit-text-stroke:0.22px #111;">C</span>
<div style="left:1344.7px;top:446px;width:79px;height:86.6px;background:#b6b6b6;border-radius:6.5px;box-shadow:0 1.2px 2.2px rgba(0,0,0,0.28);"></div>
<span class="t" style="left:1344.7px;top:481.86px;width:79px;text-align:center;font-size:15.4px;color:#111;-webkit-text-stroke:0.22px #111;">BS</span>
<div style="left:1433.2px;top:446px;width:79px;height:86.6px;background:#b6b6b6;border-radius:6.5px;box-shadow:0 1.2px 2.2px rgba(0,0,0,0.28);"></div>
<span class="t" style="left:1433.2px;top:481.86px;width:79px;text-align:center;font-size:15.4px;color:#111;-webkit-text-stroke:0.22px #111;">/</span>
<div style="left:1167.7px;top:542.2px;width:79px;height:86.6px;background:#eeeeee;border-radius:6.5px;box-shadow:0 1.2px 2.2px rgba(0,0,0,0.28);"></div>
<span class="t" style="left:1167.7px;top:578.06px;width:79px;text-align:center;font-size:15.4px;color:#111;-webkit-text-stroke:0.22px #111;">7</span>
<div style="left:1256.2px;top:542.2px;width:79px;height:86.6px;background:#eeeeee;border-radius:6.5px;box-shadow:0 1.2px 2.2px rgba(0,0,0,0.28);"></div>
<span class="t" style="left:1256.2px;top:578.06px;width:79px;text-align:center;font-size:15.4px;color:#111;-webkit-text-stroke:0.22px #111;">8</span>
<div style="left:1344.7px;top:542.2px;width:79px;height:86.6px;background:#eeeeee;border-radius:6.5px;box-shadow:0 1.2px 2.2px rgba(0,0,0,0.28);"></div>
<span class="t" style="left:1344.7px;top:578.06px;width:79px;text-align:center;font-size:15.4px;color:#111;-webkit-text-stroke:0.22px #111;">9</span>
<div style="left:1433.2px;top:542.2px;width:79px;height:86.6px;background:#b6b6b6;border-radius:6.5px;box-shadow:0 1.2px 2.2px rgba(0,0,0,0.28);"></div>
<span class="t" style="left:1433.2px;top:578.06px;width:79px;text-align:center;font-size:15.4px;color:#111;-webkit-text-stroke:0.22px #111;">X</span>
<div style="left:1167.7px;top:638.4px;width:79px;height:86.6px;background:#eeeeee;border-radius:6.5px;box-shadow:0 1.2px 2.2px rgba(0,0,0,0.28);"></div>
<span class="t" style="left:1167.7px;top:674.26px;width:79px;text-align:center;font-size:15.4px;color:#111;-webkit-text-stroke:0.22px #111;">4</span>
<div style="left:1256.2px;top:638.4px;width:79px;height:86.6px;background:#eeeeee;border-radius:6.5px;box-shadow:0 1.2px 2.2px rgba(0,0,0,0.28);"></div>
<span class="t" style="left:1256.2px;top:674.26px;width:79px;text-align:center;font-size:15.4px;color:#111;-webkit-text-stroke:0.22px #111;">5</span>
<div style="left:1344.7px;top:638.4px;width:79px;height:86.6px;background:#eeeeee;border-radius:6.5px;box-shadow:0 1.2px 2.2px rgba(0,0,0,0.28);"></div>
<span class="t" style="left:1344.7px;top:674.26px;width:79px;text-align:center;font-size:15.4px;color:#111;-webkit-text-stroke:0.22px #111;">6</span>
<div style="left:1433.2px;top:638.4px;width:79px;height:86.6px;background:#b6b6b6;border-radius:6.5px;box-shadow:0 1.2px 2.2px rgba(0,0,0,0.28);"></div>
<span class="t" style="left:1433.2px;top:674.26px;width:79px;text-align:center;font-size:15.4px;color:#111;-webkit-text-stroke:0.22px #111;">-</span>
<div style="left:1167.7px;top:734.6px;width:79px;height:86.6px;background:#eeeeee;border-radius:6.5px;box-shadow:0 1.2px 2.2px rgba(0,0,0,0.28);"></div>
<span class="t" style="left:1167.7px;top:770.46px;width:79px;text-align:center;font-size:15.4px;color:#111;-webkit-text-stroke:0.22px #111;">1</span>
<div style="left:1256.2px;top:734.6px;width:79px;height:86.6px;background:#eeeeee;border-radius:6.5px;box-shadow:0 1.2px 2.2px rgba(0,0,0,0.28);"></div>
<span class="t" style="left:1256.2px;top:770.46px;width:79px;text-align:center;font-size:15.4px;color:#111;-webkit-text-stroke:0.22px #111;">2</span>
<div style="left:1344.7px;top:734.6px;width:79px;height:86.6px;background:#eeeeee;border-radius:6.5px;box-shadow:0 1.2px 2.2px rgba(0,0,0,0.28);"></div>
<span class="t" style="left:1344.7px;top:770.46px;width:79px;text-align:center;font-size:15.4px;color:#111;-webkit-text-stroke:0.22px #111;">3</span>
<div style="left:1433.2px;top:734.6px;width:79px;height:86.6px;background:#b6b6b6;border-radius:6.5px;box-shadow:0 1.2px 2.2px rgba(0,0,0,0.28);"></div>
<span class="t" style="left:1433.2px;top:770.46px;width:79px;text-align:center;font-size:15.4px;color:#111;-webkit-text-stroke:0.22px #111;">+</span>
<div style="left:1167.7px;top:830.8px;width:79px;height:86.6px;background:#b6b6b6;border-radius:6.5px;box-shadow:0 1.2px 2.2px rgba(0,0,0,0.28);"></div>
<span class="t" style="left:1167.7px;top:866.66px;width:79px;text-align:center;font-size:15.4px;color:#111;-webkit-text-stroke:0.22px #111;">+/-</span>
<div style="left:1256.2px;top:830.8px;width:79px;height:86.6px;background:#eeeeee;border-radius:6.5px;box-shadow:0 1.2px 2.2px rgba(0,0,0,0.28);"></div>
<span class="t" style="left:1256.2px;top:866.66px;width:79px;text-align:center;font-size:15.4px;color:#111;-webkit-text-stroke:0.22px #111;">0</span>
<div style="left:1344.7px;top:830.8px;width:79px;height:86.6px;background:#b6b6b6;border-radius:6.5px;box-shadow:0 1.2px 2.2px rgba(0,0,0,0.28);"></div>
<span class="t" style="left:1344.7px;top:866.66px;width:79px;text-align:center;font-size:15.4px;color:#111;-webkit-text-stroke:0.22px #111;">.</span>
<div style="left:1433.2px;top:830.8px;width:79px;height:86.6px;background:#b6b6b6;border-radius:6.5px;box-shadow:0 1.2px 2.2px rgba(0,0,0,0.28);"></div>
<span class="t" style="left:1433.2px;top:866.66px;width:79px;text-align:center;font-size:15.4px;color:#111;-webkit-text-stroke:0.22px #111;">=</span>
<div style="left:1518px;top:807px;width:34px;height:134px;background:#2f3133;border-radius:4px;border:1px solid #3a3c3e;box-sizing:border-box;"></div>
<svg style="left:1529px;top:819px;" width="12" height="12" viewBox="0 0 12 12"><path d="M6 0 V12 M0 6 H12" stroke="#bbbbbb" stroke-width="1.7"/></svg>
<div style="left:1529px;top:857.2px;width:12px;height:1.6px;background:#6e7072;"></div>
<span class="t" style="font-size:12.5px;color:#c0c0c0;font-weight:bold;letter-spacing:-0.69px;left:1526.5px;top:884.92px;">1:1</span>
<svg style="left:1526px;top:916px;" width="18" height="15" viewBox="0 0 18 15"><rect x="0.7" y="0.7" width="16.6" height="13.6" fill="none" stroke="#5d6062" stroke-width="1.4"/><path d="M4 7 V4 H7.5 M14 8 V11 H10.5" fill="none" stroke="#5d6062" stroke-width="1.2"/></svg>
</body></html>
